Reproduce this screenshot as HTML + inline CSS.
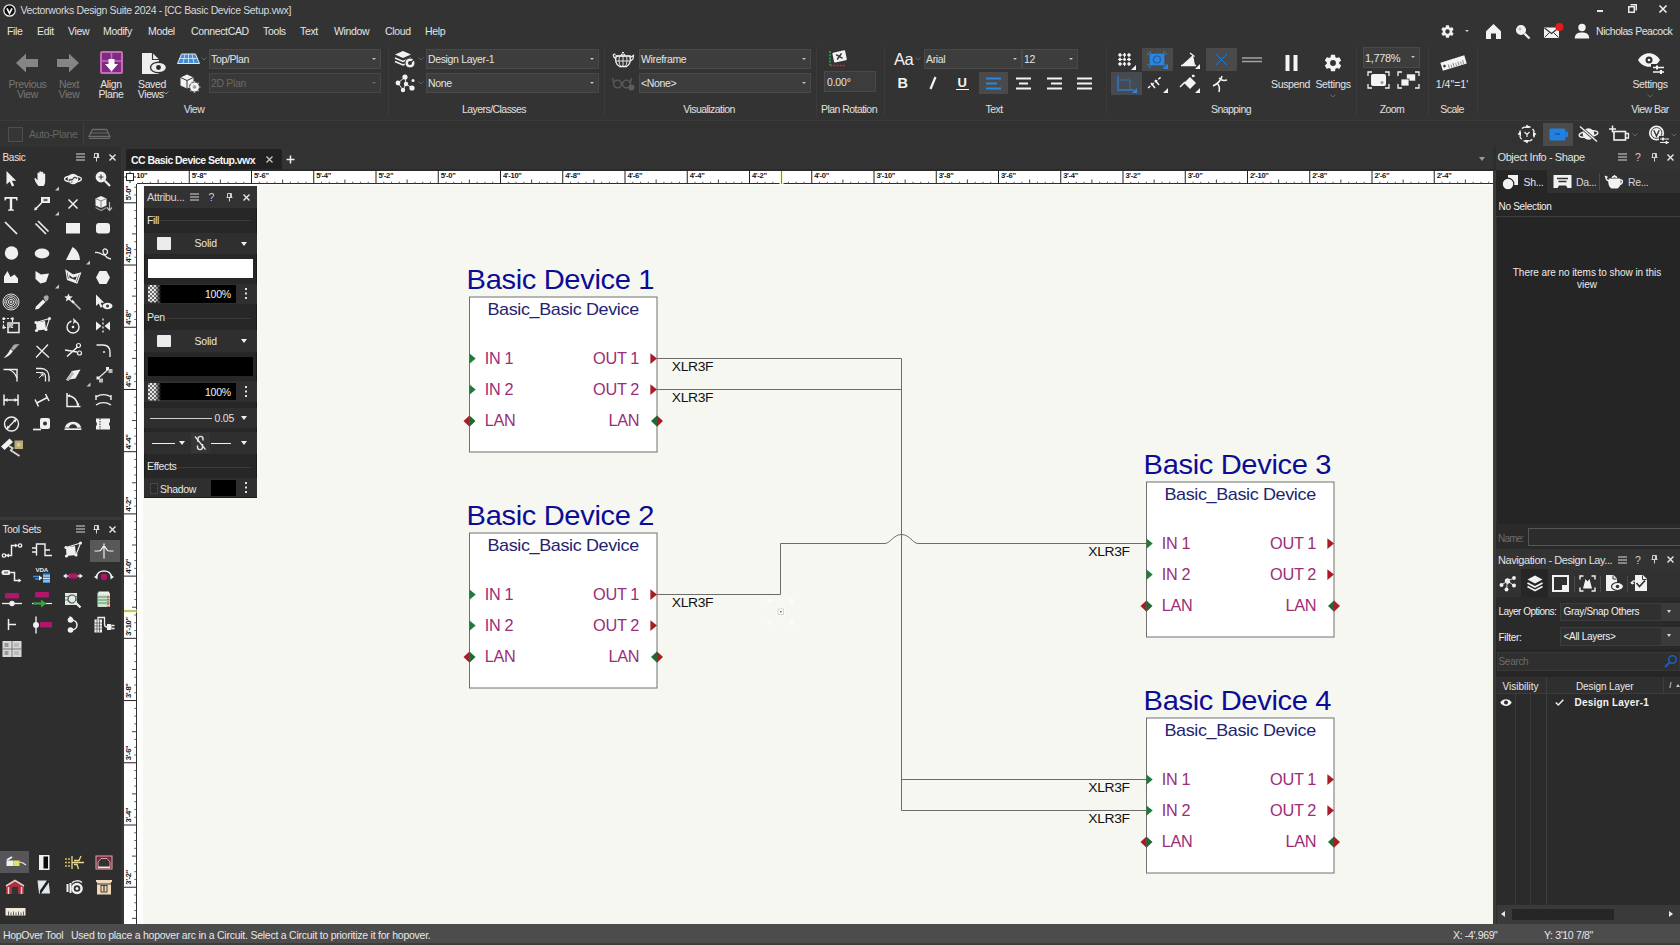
<!DOCTYPE html>
<html lang="en"><head><meta charset="utf-8"><title>Vectorworks Design Suite 2024 - [CC Basic Device Setup.vwx]</title>
<style>
*{box-sizing:border-box;margin:0;padding:0}
html,body{width:1680px;height:945px;overflow:hidden;background:#333333}
body{position:relative;font-family:"Liberation Sans",sans-serif;font-size:10.5px;letter-spacing:-0.35px;color:#e4e4e4;line-height:1;-webkit-font-smoothing:antialiased}
.a{position:absolute;white-space:nowrap}
.c{position:absolute;white-space:nowrap;transform:translateX(-50%);text-align:center}
.dim{color:#777}
svg{position:absolute;overflow:visible}
#titlebar{left:0;top:0;width:1680px;height:20px;background:#333333}
#menubar{left:0;top:20px;width:1680px;height:22px;background:#333333}
#toolbar{left:0;top:42px;width:1680px;height:78px;background:#333333}
#planebar{left:0;top:120px;width:1680px;height:27px;background:#323232}
#leftpanel{left:0;top:147px;width:124px;height:777px;background:#2e2e2e}
#tabstrip{left:124px;top:147px;width:1369px;height:24px;background:#333333}
#rightpanel{left:1493px;top:147px;width:187px;height:777px;background:#2d2d2d}
#status{left:0;top:924px;width:1680px;height:21px;background:#4c4c4c}
#canvas{left:124px;top:171px;width:1369px;height:753px;background:#f7f7f1}
.dd{position:absolute;height:20.5px;background:#3d3d3d;border:1px solid #494949;color:#e4e4e4;font-size:10.5px;padding:4.5px 0 0 1px;white-space:nowrap}
.dd.dis{color:#686868;border-color:#464646;background:#393939}
.dd:after{content:"";position:absolute;right:4.5px;top:8px;border:2px solid transparent;border-top:2.5px solid #c4c4c4;border-bottom:0}
.dd.dis:after{border-top-color:#6a6a6a}
.dd.na:after{display:none}
.sep{position:absolute;top:46px;width:1px;height:70px;background:#3a3a3a}
.glab{position:absolute;top:104px;transform:translateX(-50%);font-size:10.5px;letter-spacing:-0.55px;color:#e0e0e0;white-space:nowrap}
.tlab{position:absolute;transform:translateX(-50%);font-size:10.5px;line-height:10px;text-align:center;color:#e4e4e4;white-space:nowrap}
.tlab.dim{color:#777}
.act{position:absolute;background:#4a4a4a}
</style></head><body>
<div class="a" id="titlebar"></div>
<div class="a" id="menubar"></div>
<div class="a" id="toolbar"></div>
<div class="a" id="planebar"></div>
<div class="a" id="leftpanel"></div>
<div class="a" id="tabstrip"></div>
<div class="a" id="canvas"></div>
<div class="a" id="rightpanel"></div>
<div class="a" id="status"></div>
<svg style="left:2.500px;top:4px" width="13" height="13" viewBox="0 0 13 13"><circle cx="6.500" cy="6.500" r="5.700" fill="#0c0c0c" stroke="#f2f2f2" stroke-width="1.200"/><path d="M4 4.300 L6.500 9.300 L9 4.300" fill="none" stroke="#f4f4f4" stroke-width="1.700"/></svg>
<div class="a" style="left:20.500px;top:5px;color:#dadada">Vectorworks Design Suite 2024 - [CC Basic Device Setup.vwx]</div>
<div class="a" style="left:1597px;top:10px;width:6px;height:2px;background:#e8e8e8"></div>
<svg style="left:1628px;top:4px" width="9" height="9" viewBox="0 0 9 9"><rect x="0.75" y="2.75" width="5.5" height="5.5" fill="none" stroke="#e8e8e8" stroke-width="1.5"/><path d="M2.5 0.75 H8.25 V6.5" fill="none" stroke="#e8e8e8" stroke-width="1.5"/></svg>
<svg style="left:1659px;top:5px" width="8" height="8" viewBox="0 0 8 8"><path d="M0.5 0.5 L7.5 7.5 M7.5 0.5 L0.5 7.5" stroke="#f0f0f0" stroke-width="1.6"/></svg>

<div class="a" style="left:7px;top:26px">File</div>
<div class="a" style="left:37px;top:26px">Edit</div>
<div class="a" style="left:68px;top:26px">View</div>
<div class="a" style="left:103px;top:26px">Modify</div>
<div class="a" style="left:148px;top:26px">Model</div>
<div class="a" style="left:191px;top:26px">ConnectCAD</div>
<div class="a" style="left:263px;top:26px">Tools</div>
<div class="a" style="left:300px;top:26px">Text</div>
<div class="a" style="left:334px;top:26px">Window</div>
<div class="a" style="left:385px;top:26px">Cloud</div>
<div class="a" style="left:425px;top:26px">Help</div>
<!-- right cluster -->
<svg style="left:1440px;top:24px" width="15" height="15" viewBox="0 0 24 24"><path fill="#f0f0f0" d="M19.4 13c.04-.33.06-.66.06-1s-.02-.67-.07-1l2.1-1.650c.2-.15.25-.42.13-.64l-2-3.460c-.12-.22-.39-.3-.61-.22l-2.490 1c-.52-.4-1.080-.73-1.690-.98l-.38-2.650A.49.49 0 0 0 14 2h-4c-.25 0-.46.18-.49.42l-.38 2.650c-.61.25-1.170.59-1.690.98l-2.490-1c-.23-.09-.49 0-.61.22l-2 3.460c-.13.22-.07.49.12.64L4.570 11c-.04.33-.07.67-.07 1s.03.670.07 1l-2.110 1.650c-.19.150-.24.420-.12.640l2 3.460c.12.220.39.300.61.220l2.490-1c.52.400 1.080.730 1.690.980l.38 2.650c.03.240.24.420.49.420h4c.25 0 .46-.18.49-.42l.38-2.650c.61-.25 1.170-.59 1.690-.98l2.490 1c.23.090.49 0 .61-.22l2-3.460c.12-.22.07-.49-.12-.64L19.400 13zM12 15.500A3.500 3.500 0 1 1 12 8.500a3.500 3.500 0 0 1 0 7z"/></svg>
<div class="a" style="left:1465px;top:30px;border:2.200px solid transparent;border-top:2.500px solid #ccc;border-bottom:0"></div>
<svg style="left:1485px;top:23px" width="17" height="17" viewBox="0 0 17 17"><path d="M8.5 1 L16 8.200 V16 H11 V10.500 H6 V16 H1 V8.200 Z" fill="#f2f2f2"/></svg>
<svg style="left:1515px;top:24px" width="16" height="16" viewBox="0 0 16 16"><circle cx="6" cy="6" r="4.300" fill="#f2f2f2" stroke="#f2f2f2" stroke-width="1.5"/><path d="M9.500 9.500 L14.500 14.500" stroke="#f2f2f2" stroke-width="2.300"/><circle cx="5" cy="5" r="1.500" fill="#bbb"/></svg>
<svg style="left:1543px;top:22px" width="22" height="18" viewBox="0 0 22 18"><rect x="1" y="5.500" width="15" height="10.500" fill="#f2f2f2"/><path d="M1.500 6 L8.500 11.500 L15.500 6" stroke="#333" stroke-width="1.200" fill="none"/><path d="M1.500 15.500 L6.500 10.500 M15.500 15.500 L10.500 10.500" stroke="#333" stroke-width="1"/><circle cx="16.500" cy="5" r="4" fill="#e21b1b"/></svg>
<svg style="left:1574px;top:23px" width="16" height="16" viewBox="0 0 16 16"><circle cx="8" cy="4.500" r="3.700" fill="#f2f2f2"/><path d="M0.800 15.500 C0.800 10.500 4 9.500 8 9.500 S15.200 10.500 15.200 15.500 Z" fill="#f2f2f2"/></svg>
<div class="a" style="left:1596px;top:26px;letter-spacing:-0.45px">Nicholas Peacock</div>

<!-- View group -->
<svg style="left:16px;top:53px" width="22" height="20" viewBox="0 0 22 20"><path d="M0 10 L10 0.500 V6 H22 V14 H10 V19.500 Z" fill="#858585"/></svg>
<div class="tlab dim" style="left:27.500px;top:79px">Previous<br>View</div>
<svg style="left:57px;top:53px" width="22" height="20" viewBox="0 0 22 20"><path d="M22 10 L12 0.500 V6 H0 V14 H12 V19.500 Z" fill="#858585"/></svg>
<div class="tlab dim" style="left:69px;top:79px">Next<br>View</div>
<svg style="left:100px;top:51px" width="23" height="23" viewBox="0 0 23 23"><rect x="1" y="1" width="21" height="21" rx="1" fill="#7d2c7e" stroke="#c969bd" stroke-width="2"/><path d="M11.500 1 V22 M1 10 H22" stroke="#c969bd" stroke-width="1.600"/><path d="M8.500 8 H14.500 V13 H18 L11.500 20.500 L5 13 H8.500 Z" fill="#fafafa"/></svg>
<div class="tlab" style="left:111px;top:79px">Align<br>Plane</div>
<svg style="left:141px;top:52px" width="27" height="23" viewBox="0 0 27 23"><path d="M1 1 H11.500 L18 7.500 V22 H1 Z" fill="#f0eef0"/><path d="M11.500 1 V7.500 H18" fill="none" stroke="#333" stroke-width="1.200"/><ellipse cx="17.500" cy="15.500" rx="8" ry="5.300" fill="#f0eef0" stroke="#333" stroke-width="1.400"/><circle cx="17.500" cy="15.500" r="2.400" fill="#2a2a2a"/></svg>
<div class="tlab" style="left:152px;top:79px">Saved<br>Views&nbsp;</div>
<svg style="left:163px;top:91px" width="6" height="4" viewBox="0 0 6 4"><path d="M0.500 0.500 L3 3 L5.500 0.500" stroke="#999" fill="none"/></svg>
<svg style="left:177px;top:53px" width="23" height="12" viewBox="0 0 23 12"><path d="M4.500 1 H18.500 L22.500 10.500 H0.500 Z" fill="#3f8fdc" stroke="#dfe9f5" stroke-width="1"/><path d="M11.500 1 V10.500 M2.500 5.500 H20.500 M8 1 L6 10.500 M15 1 L17 10.500" stroke="#dfe9f5" stroke-width="0.800"/></svg>
<svg style="left:201px;top:57px" width="6" height="4" viewBox="0 0 6 4"><path d="M0.500 0.500 L3 3 L5.500 0.500" stroke="#626262" fill="none"/></svg>
<svg style="left:180px;top:74px" width="20" height="19" viewBox="0 0 20 19"><path d="M7 0.500 L13.500 3.500 V11.500 L7 14.500 L0.500 11.500 V3.500 Z" fill="#f2f2f2"/><path d="M0.500 3.500 L7 6.500 L13.500 3.500 M7 6.500 V14.500" stroke="#333" stroke-width="1" fill="none"/><circle cx="14.500" cy="13" r="5" fill="#f2f2f2" stroke="#333" stroke-width="1"/><circle cx="14.500" cy="13" r="1.800" fill="#333"/><path d="M14.500 7 V19 M8.500 13 H20.500 M10.300 8.800 L18.700 17.200 M18.700 8.800 L10.300 17.200" stroke="#f2f2f2" stroke-width="1.600" opacity="0.550"/></svg>
<div class="dd" style="left:209px;top:48.500px;width:172px">Top/Plan</div>
<div class="dd dis" style="left:209px;top:72.500px;width:172px">2D Plan</div>
<div class="glab" style="left:194px">View</div>
<div class="sep" style="left:388px"></div>
<!-- Layers/Classes -->
<svg style="left:394px;top:50px" width="22" height="19" viewBox="0 0 22 19"><path d="M1 4.500 L9 1 L17 4.500 L9 8 Z" fill="#f2f2f2"/><path d="M1 8 L9 11.500 L17 8 M1 11.500 L9 15 L13 13.300" stroke="#f2f2f2" stroke-width="1.500" fill="none"/><circle cx="16" cy="13" r="5" fill="#f2f2f2" stroke="#333" stroke-width="1"/><circle cx="16" cy="13" r="2" fill="#333"/><path d="M16 13 L21 9" stroke="#333" stroke-width="1.400"/></svg>
<svg style="left:418px;top:57px" width="6" height="4" viewBox="0 0 6 4"><path d="M0.500 0.500 L3 3 L5.500 0.500" stroke="#626262" fill="none"/></svg>
<svg style="left:395px;top:74px" width="21" height="19" viewBox="0 0 21 19"><g fill="#f2f2f2"><circle cx="10" cy="3" r="2.600"/><circle cx="3" cy="9" r="2.400"/><circle cx="11" cy="10" r="2.200"/><circle cx="17" cy="14" r="2.600"/><circle cx="8" cy="16" r="2.200"/><circle cx="18" cy="6.500" r="1.500"/></g><path d="M10 3 L3 9 L8 16 L11 10 L17 14 M11 10 L10 3" stroke="#f2f2f2" stroke-width="0.900" fill="none"/></svg>
<svg style="left:418px;top:81px" width="6" height="4" viewBox="0 0 6 4"><path d="M0.500 0.500 L3 3 L5.500 0.500" stroke="#626262" fill="none"/></svg>
<div class="dd" style="left:426px;top:48.500px;width:173px">Design Layer-1</div>
<div class="dd" style="left:426px;top:72.500px;width:173px">None</div>
<div class="glab" style="left:494px">Layers/Classes</div>
<div class="sep" style="left:604px"></div>
<!-- Visualization -->
<svg style="left:612px;top:50px" width="22" height="18" viewBox="0 0 22 18"><path d="M4.500 6 C2.500 10 4 15 7.500 16.500 H14.500 C18 15 19.500 10 17.500 6 Z" fill="none" stroke="#f2f2f2" stroke-width="1.300"/><path d="M3 6 H19 M11 6 V16.500 M7.500 6.500 C6.500 10 7 14 8.500 16.500 M14.500 6.500 C15.500 10 15 14 13.500 16.500 M4 11 H18" stroke="#f2f2f2" stroke-width="0.900" fill="none"/><path d="M9 5.500 C9 3.500 13 3.500 13 5.500 M10 2.500 H12" stroke="#f2f2f2" stroke-width="1.200" fill="none"/><path d="M4 8.500 C0.500 7 0.500 3 3.500 4.500 M18 7.500 L21.500 5.500 L21 9 L18.500 11" stroke="#f2f2f2" stroke-width="1.200" fill="none"/></svg>
<svg style="left:612px;top:76px" width="23" height="15" viewBox="0 0 23 15"><g stroke="#5c5c5c" stroke-width="1.300" fill="none"><circle cx="5.500" cy="8" r="3.800"/><circle cx="14.500" cy="8" r="3.800"/><path d="M9.300 7.500 C9.800 6.500 10.200 6.500 10.700 7.500 M1.700 7 L0.500 2 M18.300 7 L19.500 2"/></g><circle cx="19.500" cy="11.500" r="3" fill="#5c5c5c"/></svg>
<div class="dd" style="left:639px;top:48.500px;width:172px">Wireframe</div>
<div class="dd" style="left:639px;top:72.500px;width:172px">&lt;None&gt;</div>
<div class="glab" style="left:709px">Visualization</div>
<div class="sep" style="left:816px"></div>
<!-- Plan rotation -->
<svg style="left:827px;top:48px" width="22" height="21" viewBox="0 0 22 21"><path d="M3 3 V17" stroke="#2fa84f" stroke-width="1.600" stroke-dasharray="2 1.200"/><path d="M3 17.500 H19" stroke="#d03030" stroke-width="1.600" stroke-dasharray="2 1.200"/><rect x="6" y="3.500" width="13" height="10" rx="1" fill="#f2f2f2" transform="rotate(-12 12 8)"/><path d="M9.500 6 L15 11 M15 6 L9.500 11" stroke="#333" stroke-width="1.500" transform="rotate(-12 12 8)"/></svg>
<div class="dd na" style="left:824px;top:71px;width:52px;height:21px;background:#3c3c3c;padding-left:2px"><span style="letter-spacing:-0.2px">0.00°</span></div>
<div class="glab" style="left:849px">Plan Rotation</div>
<div class="sep" style="left:884px"></div>
<!-- Text group -->
<div class="a" style="left:894px;top:51px;font-size:16.500px;letter-spacing:-0.5px;color:#f4f4f4">Aa</div>
<svg style="left:915px;top:57px" width="6" height="4" viewBox="0 0 6 4"><path d="M0.500 0.500 L3 3 L5.500 0.500" stroke="#626262" fill="none"/></svg>
<div class="dd" style="left:924px;top:48.500px;width:98px">Arial</div>
<div class="dd" style="left:1022px;top:48.500px;width:56px">12</div>
<div class="a" style="left:897.500px;top:76px;font-size:14.500px;font-weight:700;color:#f4f4f4;letter-spacing:0">B</div>
<svg style="left:927px;top:76px" width="12" height="14" viewBox="0 0 12 14"><path d="M8.500 1 L3.500 13" stroke="#f4f4f4" stroke-width="2.200"/></svg>
<div class="a" style="left:957.500px;top:76px;font-size:13px;font-weight:700;color:#f4f4f4;letter-spacing:0">U</div>
<div class="a" style="left:956px;top:88.500px;width:13px;height:1.500px;background:#f4f4f4"></div>
<div class="act" style="left:979px;top:72px;width:29px;height:22px"></div>
<svg style="left:986px;top:77px" width="15" height="13" viewBox="0 0 15 13"><path d="M0 1.500 H15 M0 6.500 H11 M0 11.500 H15" stroke="#2b86dc" stroke-width="2"/></svg>
<svg style="left:1016px;top:77px" width="15" height="13" viewBox="0 0 15 13"><path d="M0 1.500 H15 M3 6.500 H12 M0 11.500 H15" stroke="#f4f4f4" stroke-width="2"/></svg>
<svg style="left:1047px;top:77px" width="15" height="13" viewBox="0 0 15 13"><path d="M0 1.500 H15 M4 6.500 H15 M0 11.500 H15" stroke="#f4f4f4" stroke-width="2"/></svg>
<svg style="left:1077px;top:77px" width="15" height="13" viewBox="0 0 15 13"><path d="M0 1.500 H15 M0 6.500 H15 M0 11.500 H15" stroke="#f4f4f4" stroke-width="2"/></svg>
<div class="glab" style="left:994px">Text</div>
<div class="sep" style="left:1106px"></div>
<!-- Snapping -->
<svg style="left:1116px;top:52px" width="22" height="18" viewBox="0 0 22 18"><path d="M2 3 H15 M2 7.500 H15 M2 12 H15 M4 1 V14 M8.500 1 V14 M13 1 V14" stroke="#f4f4f4" stroke-width="1" stroke-dasharray="1.500 1.500"/><g fill="#f4f4f4"><circle cx="4" cy="3" r="1.400"/><circle cx="8.500" cy="3" r="1.400"/><circle cx="13" cy="3" r="1.400"/><circle cx="4" cy="7.500" r="1.400"/><circle cx="8.500" cy="7.500" r="1.400"/><circle cx="13" cy="7.500" r="1.400"/><circle cx="4" cy="12" r="1.400"/><circle cx="8.500" cy="12" r="1.400"/><circle cx="13" cy="12" r="1.400"/><path d="M20 13 V18 H15 Z"/></g></svg>
<div class="act" style="left:1142px;top:48px;width:31px;height:23px"></div>
<svg style="left:1146px;top:50px" width="24" height="20" viewBox="0 0 24 20"><rect x="4" y="4" width="14" height="11" fill="#2b86dc"/><path d="M1 4 H21 M1 15 H21 M4 1 V18 M18 1 V18" stroke="#2b86dc" stroke-width="1" stroke-dasharray="2 1"/><circle cx="11" cy="9.500" r="3.500" fill="none" stroke="#1b5fa6" stroke-width="1.200"/><path d="M22 14 V19 H17 Z" fill="#2b86dc"/></svg>
<svg style="left:1180px;top:51px" width="22" height="19" viewBox="0 0 22 19"><path d="M2 14 L13 4 L15 14 Z" fill="#f4f4f4"/><path d="M1 14.500 H16 M10 2 L14.500 5.500" stroke="#f4f4f4" stroke-width="1.300"/><path d="M20 13 V18 H15 Z" fill="#f4f4f4"/></svg>
<div class="act" style="left:1206px;top:48px;width:31px;height:23px"></div>
<svg style="left:1214px;top:52px" width="15" height="15" viewBox="0 0 15 15"><path d="M2 2 L13 13 M13 2 L2 13" stroke="#2a78c8" stroke-width="1"/></svg>
<svg style="left:1241px;top:56px" width="22" height="8" viewBox="0 0 22 8"><path d="M1 2 H21 M1 5.500 H21" stroke="#a4a4a4" stroke-width="1.300"/></svg>
<div class="act" style="left:1111px;top:72px;width:31px;height:23px;background:#484a52"></div>
<svg style="left:1115px;top:75px" width="24" height="19" viewBox="0 0 24 19"><path d="M3 1 V15 H19" stroke="#2b7bc8" stroke-width="1.400" fill="none"/><path d="M3 5 H15 V15" stroke="#2b7bc8" stroke-width="1" fill="none" opacity="0.800"/><path d="M22 13 V18 H17 Z" fill="#2b86dc"/></svg>
<svg style="left:1146px;top:75px" width="24" height="19" viewBox="0 0 24 19"><path d="M2 13 L15 2" stroke="#f4f4f4" stroke-width="1.500" stroke-dasharray="3 1.500"/><path d="M5 8 L9 13 M9 5 L13 10" stroke="#f4f4f4" stroke-width="1.500"/><path d="M22 13 V18 H17 Z" fill="#f4f4f4"/></svg>
<svg style="left:1178px;top:74px" width="24" height="20" viewBox="0 0 24 20"><path d="M6 9 L12 3 L18 9 L12 15 Z" fill="#f4f4f4"/><path d="M2 13 L7 8 M15 1 L16.500 2.500" stroke="#f4f4f4" stroke-width="1.500"/><circle cx="15" cy="2" r="1.200" fill="#f4f4f4"/><path d="M22 14 V19 H17 Z" fill="#f4f4f4"/></svg>
<svg style="left:1211px;top:75px" width="18" height="18" viewBox="0 0 18 18"><path d="M2 11 C6 9 10 6 11 1 M6 8 C8 10 9 13 8 17 M8 3 C10 5 13 6 16 5" stroke="#f4f4f4" stroke-width="1.500" fill="none"/></svg>
<svg style="left:1285px;top:55px" width="13" height="16" viewBox="0 0 13 16"><rect x="0.500" y="0" width="4" height="16" fill="#f4f4f4"/><rect x="8.500" y="0" width="4" height="16" fill="#f4f4f4"/></svg>
<div class="tlab" style="left:1290.500px;top:79px">Suspend</div>
<svg style="left:1323px;top:53px" width="20" height="20" viewBox="0 0 24 24"><path fill="#f4f4f4" d="M19.4 13c.04-.33.06-.66.06-1s-.02-.67-.07-1l2.100-1.650c.2-.15.25-.42.13-.64l-2-3.460c-.12-.22-.39-.3-.61-.22l-2.490 1c-.52-.4-1.080-.73-1.690-.98l-.38-2.650A.49.49 0 0 0 14 2h-4c-.25 0-.46.18-.49.42l-.38 2.650c-.61.250-1.170.590-1.690.980l-2.490-1c-.23-.09-.49 0-.61.220l-2 3.460c-.13.220-.07.490.12.640L4.570 11c-.04.330-.07.670-.07 1s.03.670.07 1l-2.110 1.650c-.19.150-.24.420-.12.640l2 3.460c.12.220.39.300.61.220l2.490-1c.52.400 1.080.730 1.690.980l.38 2.650c.03.240.24.420.49.420h4c.25 0 .46-.18.49-.42l.38-2.650c.61-.25 1.170-.59 1.690-.98l2.490 1c.23.090.49 0 .61-.22l2-3.460c.12-.22.070-.49-.12-.64L19.400 13zM12 15.500A3.500 3.500 0 1 1 12 8.500a3.500 3.500 0 0 1 0 7z"/></svg>
<div class="tlab" style="left:1333px;top:79px">Settings</div>
<svg style="left:1330px;top:94px" width="6" height="4" viewBox="0 0 6 4"><path d="M0.500 0.500 L3 3 L5.500 0.500" stroke="#666" fill="none"/></svg>
<div class="glab" style="left:1231px">Snapping</div>
<div class="sep" style="left:1356px"></div>
<!-- Zoom -->
<div class="dd" style="left:1363px;top:47px;width:57px;height:21px;font-size:11px">1,778%</div>
<svg style="left:1367px;top:71px" width="23" height="18" viewBox="0 0 23 18"><rect x="4" y="3" width="15" height="12" rx="2" fill="#f4f4f4"/><path d="M1 5 V1 H5 M18 1 H22 V5 M22 13 V17 H18 M5 17 H1 V13" stroke="#f4f4f4" stroke-width="1.300" fill="none"/><circle cx="15" cy="11.500" r="1.500" fill="#999"/></svg>
<svg style="left:1397px;top:71px" width="23" height="18" viewBox="0 0 23 18"><rect x="9.500" y="3" width="9" height="7" fill="#f4f4f4" stroke="#333" stroke-width="0.600"/><rect x="4" y="8" width="8" height="7" fill="#f4f4f4" stroke="#333" stroke-width="0.800"/><path d="M1 5 V1 H5 M18 1 H22 V5 M22 13 V17 H18 M5 17 H1 V13" stroke="#f4f4f4" stroke-width="1.300" fill="none"/></svg>
<div class="glab" style="left:1392px">Zoom</div>
<div class="sep" style="left:1428px"></div>
<!-- Scale -->
<svg style="left:1439px;top:53px" width="28" height="20" viewBox="0 0 28 20"><g transform="rotate(-17 14 10)"><rect x="2" y="6" width="25" height="8.500" fill="#f4f4f4"/><circle cx="5" cy="10.500" r="1.300" fill="#333"/><path d="M9 10 V14 M11.500 11 V14 M14 10 V14 M16.500 11 V14 M19 10 V14 M21.500 11 V14 M24 10 V14" stroke="#888" stroke-width="0.900"/></g></svg>
<div class="tlab" style="left:1452px;top:79px;letter-spacing:0">1/4"=1'</div>
<div class="glab" style="left:1452px">Scale</div>
<div class="sep" style="left:1477px"></div>
<!-- View bar -->
<svg style="left:1637px;top:51px" width="28" height="24" viewBox="0 0 28 24"><path d="M1 9 C6 0 18 0 23 9 C18 18 6 18 1 9 Z" fill="#f4f4f4"/><circle cx="12" cy="9" r="3.500" fill="#333"/><circle cx="12" cy="9" r="1.300" fill="#f4f4f4"/><rect x="14" y="13" width="14" height="11" fill="#333"/><path d="M16 16.500 H27 M16 21 H27" stroke="#f4f4f4" stroke-width="1.400"/><path d="M20 14.500 V18.500 M24 19 V23" stroke="#f4f4f4" stroke-width="2"/></svg>
<div class="tlab" style="left:1650px;top:79px">Settings</div>
<svg style="left:1647px;top:94px" width="6" height="4" viewBox="0 0 6 4"><path d="M0.500 0.500 L3 3 L5.500 0.500" stroke="#666" fill="none"/></svg>
<div class="glab" style="left:1650px">View Bar</div>



<div class="a" style="left:0;top:120px;width:1680px;height:1px;background:#3b3b3b"></div>
<div class="a" style="left:8px;top:127px;width:15px;height:15px;border:1px solid #4e4e4e;background:#363636"></div>
<div class="a" style="left:29px;top:129px;color:#646464">Auto-Plane</div>
<div class="a" style="left:83px;top:123px;width:1px;height:22px;background:#3e3e3e"></div>
<svg style="left:88px;top:128px" width="23" height="12" viewBox="0 0 23 12"><path d="M4.500 1.500 H18.500 L22 8.500 H1 Z" fill="none" stroke="#6c6c6c" stroke-width="1.300"/><path d="M3 5 H20 M1 10.500 H22" stroke="#6c6c6c" stroke-width="1.200"/></svg>
<!-- right icons -->
<svg style="left:1517px;top:124px" width="20" height="20" viewBox="0 0 20 20"><circle cx="10" cy="10" r="7.500" fill="none" stroke="#f0f0f0" stroke-width="1.300" stroke-dasharray="3.500 2.400"/><path d="M10 0.500 L12.500 4 H7.500 Z M10 19.500 L12.500 16 H7.500 Z M0.500 10 L4 7.500 V12.500 Z M19.500 10 L16 7.500 V12.500 Z" fill="#f0f0f0"/><path d="M7.500 8 L10 10.500 L12.500 8 M10 10.500 V13" stroke="#f0f0f0" stroke-width="1.100" fill="none"/></svg>
<div class="act" style="left:1543px;top:123px;width:30px;height:23px;background:#4b4b4b"></div>
<svg style="left:1549px;top:128px" width="19" height="14" viewBox="0 0 19 14"><rect x="0.500" y="0.500" width="16" height="12" rx="1.500" fill="#2380de"/><rect x="16.500" y="4" width="2.500" height="5" fill="#2380de"/><path d="M6 6 H11" stroke="#154f8c" stroke-width="1.200"/></svg>
<svg style="left:1578px;top:125px" width="21" height="18" viewBox="0 0 21 18"><circle cx="10.500" cy="9" r="5.800" fill="#f0f0f0"/><ellipse cx="10.500" cy="9" rx="9.500" ry="3" fill="none" stroke="#f0f0f0" stroke-width="1.300" transform="rotate(-8 10.500 9)"/><path d="M2 1.500 L19 16.500" stroke="#333" stroke-width="3"/><path d="M2 1.500 L19 16.500" stroke="#f0f0f0" stroke-width="1.400"/></svg>
<svg style="left:1608px;top:125px" width="22" height="18" viewBox="0 0 22 18"><rect x="6" y="6.500" width="11.500" height="8.500" fill="none" stroke="#f0f0f0" stroke-width="1.600"/><path d="M17.500 8.500 H20.500 V13 H17.500" fill="none" stroke="#f0f0f0" stroke-width="1.300"/><path d="M1 4 H8 M4.500 0.500 V7.500" stroke="#f0f0f0" stroke-width="1.500"/></svg>
<svg style="left:1632px;top:133px" width="6" height="4" viewBox="0 0 6 4"><path d="M0.500 0.500 L3 3 L5.500 0.500" stroke="#666" fill="none"/></svg>
<svg style="left:1646px;top:123px" width="24" height="22" viewBox="0 0 24 22"><circle cx="10.500" cy="10" r="7.600" fill="#f0f0f0"/><circle cx="10.500" cy="10" r="5.400" fill="none" stroke="#333" stroke-width="0.900"/><path d="M7.800 7.300 L10.500 13 L13.200 7.300" fill="none" stroke="#333" stroke-width="1.400"/><rect x="13" y="13" width="11" height="9" fill="#323232"/><path d="M14 16 H23 M14 19.500 H23" stroke="#f0f0f0" stroke-width="1.200"/><path d="M17 14.500 V17.500 M20.500 18 V21" stroke="#f0f0f0" stroke-width="1.800"/></svg>
<svg style="left:1671px;top:133px" width="6" height="4" viewBox="0 0 6 4"><path d="M0.500 0.500 L3 3 L5.500 0.500" stroke="#666" fill="none"/></svg>

<!-- Basic palette -->
<div class="a" style="left:2.500px;top:152.500px;font-size:10px;letter-spacing:-0.3px">Basic</div>
<svg style="left:76px;top:153px" width="9" height="8" viewBox="0 0 9 8"><path d="M0 1 H9 M0 4 H9 M0 7 H9" stroke="#d8d8d8" stroke-width="1.100"/></svg>
<svg style="left:93px;top:152.5px" width="7" height="9" viewBox="0 0 7 9"><path d="M1.500 0.500 H5.500 V4.500 H1.500 Z M0.500 4.500 H6.500 M3.500 4.500 V8.500" stroke="#d8d8d8" stroke-width="1" fill="none"/><path d="M4.500 0.500 V4.500" stroke="#d8d8d8" stroke-width="1.200"/></svg>
<svg style="left:109px;top:153.5px" width="7" height="7" viewBox="0 0 7 7"><path d="M0.500 0.500 L6.500 6.500 M6.500 0.500 L0.500 6.500" stroke="#e8e8e8" stroke-width="1.400"/></svg>
<svg style="left:2px;top:170px" width="18" height="18" viewBox="0 0 18 18"><path d="M4.500 1 V14.500 L7.700 11.500 L10 16.500 L12.200 15.500 L9.900 10.700 H14.200 Z" fill="#f0f0f0"/></svg>
<svg style="left:33px;top:170px" width="18" height="18" viewBox="0 0 18 18"><path d="M5.500 16 C3.500 14 2 11 1.500 9 C1.300 8 2.500 7.700 3.200 8.700 L4.500 10.500 V3.500 C4.500 2.200 6.200 2.200 6.300 3.500 V2.200 C6.400 0.900 8.200 0.900 8.300 2.200 V2.700 C8.400 1.400 10.200 1.500 10.300 2.800 V4.200 C10.500 3.100 12.200 3.200 12.200 4.500 V11 C12.200 13.500 11.500 15 10.500 16 Z" fill="#f0f0f0"/><path d="M26 16.5 v4 h-4 z" fill="#c8c8c8"/></svg>
<svg style="left:64px;top:170px" width="18" height="18" viewBox="0 0 18 18"><circle cx="9" cy="9" r="5.300" fill="#f0f0f0"/><ellipse cx="9" cy="9" rx="8.500" ry="3" fill="none" stroke="#f0f0f0" stroke-width="1.300"/><path d="M5 10.500 C6.500 8 8 11 9 9 S11.500 7 13 8.500" stroke="#444" stroke-width="1.300" fill="none"/><circle cx="6.500" cy="11.500" r="1.600" fill="none" stroke="#666" stroke-width="0.800"/></svg>
<svg style="left:94px;top:170px" width="18" height="18" viewBox="0 0 18 18"><circle cx="7" cy="7" r="4.600" fill="#f0f0f0" stroke="#f0f0f0" stroke-width="1.600"/><path d="M10.800 10.800 L16 16" stroke="#f0f0f0" stroke-width="2.200"/><path d="M7 4.500 V9.500 M4.500 7 H9.500" stroke="#444" stroke-width="1.200"/></svg>
<svg style="left:2px;top:194.5px" width="18" height="18" viewBox="0 0 18 18"><path d="M2.500 2 H15.500 V5.500 H14.300 L13.800 3.700 H10.200 V14.200 L12 14.700 V15.800 H6 V14.700 L7.800 14.200 V3.700 H4.200 L3.700 5.500 H2.500 Z" fill="#f0f0f0"/></svg>
<svg style="left:33px;top:194.5px" width="18" height="18" viewBox="0 0 18 18"><rect x="8" y="2" width="9" height="6" fill="#f0f0f0"/><rect x="10.500" y="3.800" width="4" height="2.400" fill="#666"/><path d="M8.500 8 L2.500 14" stroke="#f0f0f0" stroke-width="1.600"/><path d="M1 15.500 L4.500 14.500 L2 12 Z" fill="#f0f0f0"/><path d="M26 16.5 v4 h-4 z" fill="#c8c8c8"/></svg>
<svg style="left:64px;top:194.5px" width="18" height="18" viewBox="0 0 18 18"><path d="M4.500 4.500 L13.500 13.500 M13.500 4.500 L4.500 13.500" stroke="#f0f0f0" stroke-width="1.500"/></svg>
<svg style="left:94px;top:194.5px" width="18" height="18" viewBox="0 0 18 18"><path d="M7 1 L12.500 3.500 V10.500 L7 13 L1.500 10.500 V3.500 Z" fill="#f0f0f0"/><path d="M1.500 3.500 L7 6 L12.500 3.500 M7 6 V13" stroke="#777" stroke-width="0.900" fill="none"/><path d="M1.500 12.500 L7 15.500 L12.500 12.500" stroke="#999" stroke-width="1.300" fill="none"/><path d="M15.500 7 V15 M13 12.500 L15.500 15.500 L18 12.500" stroke="#bbb" stroke-width="1.200" fill="none"/></svg>
<svg style="left:2px;top:219px" width="18" height="18" viewBox="0 0 18 18"><path d="M3 3 L15 15" stroke="#f0f0f0" stroke-width="1.700"/></svg>
<svg style="left:33px;top:219px" width="18" height="18" viewBox="0 0 18 18"><path d="M2.500 4.500 L13 15 M5 2 L15.500 12.500" stroke="#f0f0f0" stroke-width="1.600"/></svg>
<svg style="left:64px;top:219px" width="18" height="18" viewBox="0 0 18 18"><rect x="2" y="4" width="14" height="10.500" fill="#f0f0f0"/></svg>
<svg style="left:94px;top:219px" width="18" height="18" viewBox="0 0 18 18"><rect x="2" y="4" width="14" height="10.500" rx="3" fill="#f0f0f0"/></svg>
<svg style="left:2px;top:243.5px" width="18" height="18" viewBox="0 0 18 18"><circle cx="9.500" cy="9" r="6.700" fill="#f0f0f0"/></svg>
<svg style="left:33px;top:243.5px" width="18" height="18" viewBox="0 0 18 18"><ellipse cx="9" cy="9.500" rx="7.300" ry="5" fill="#f0f0f0"/></svg>
<svg style="left:64px;top:243.5px" width="18" height="18" viewBox="0 0 18 18"><path d="M2 16 L8.500 3 C12.500 5 15.500 9.500 16 16 Z" fill="#f0f0f0"/><path d="M26 16.5 v4 h-4 z" fill="#c8c8c8"/></svg>
<svg style="left:94px;top:243.5px" width="18" height="18" viewBox="0 0 18 18"><path d="M1 8.500 C4 8 6 9 8.500 10.500 C12 12.500 15 8 12.500 5.500 C10.500 3.500 8 6 9.500 9 C11 12 13.500 14.500 17 15" stroke="#f0f0f0" stroke-width="1.300" fill="none"/></svg>
<svg style="left:2px;top:268px" width="18" height="18" viewBox="0 0 18 18"><path d="M2 15 V8.500 L5.500 3 L8.500 9 L12.500 6.500 L16 10.500 V15 Z" fill="#f0f0f0"/></svg>
<svg style="left:33px;top:268px" width="18" height="18" viewBox="0 0 18 18"><path d="M2.500 3 L8 6.500 L16 5.500 L13 14 L7.500 15.500 L2.500 11 Z" fill="#f0f0f0"/><path d="M26 16.5 v4 h-4 z" fill="#c8c8c8"/></svg>
<svg style="left:64px;top:268px" width="18" height="18" viewBox="0 0 18 18"><path d="M2 2.500 L9 7 L16.500 5 L13 15 L3.500 11.500 Z" fill="none" stroke="#f0f0f0" stroke-width="1.200"/><path d="M4.200 5.500 L8.800 9 L13.800 7.500 L11.800 12.800 L5.200 10.300 Z" fill="none" stroke="#f0f0f0" stroke-width="1.200"/><path d="M2 2.500 L9 7 L16.500 5 L13.800 7.500 L8.800 9 L4.200 5.500 Z M13 15 L11.800 12.800 L5.200 10.300 L3.500 11.500 Z" fill="#f0f0f0"/></svg>
<svg style="left:94px;top:268px" width="18" height="18" viewBox="0 0 18 18"><path d="M5.500 3 H12.500 L16 9.500 L12.500 16 H5.500 L2 9.500 Z" fill="#f0f0f0"/></svg>
<svg style="left:2px;top:292.5px" width="18" height="18" viewBox="0 0 18 18"><g fill="none" stroke="#f0f0f0" stroke-width="0.900"><circle cx="9" cy="9" r="8"/><circle cx="9" cy="9" r="6.200"/><circle cx="9" cy="9" r="4.400"/><circle cx="9" cy="9" r="2.600"/><circle cx="9" cy="9" r="0.900"/></g></svg>
<svg style="left:33px;top:292.5px" width="18" height="18" viewBox="0 0 18 18"><path d="M2 16.500 L3 13.500 L10 6.500 L12.500 9 L5.500 16 Z" fill="#f0f0f0"/><path d="M10.500 4.500 C12 1.500 16.500 1.500 15.500 5.500 C15 8 13 8.500 12.500 8.500 Z" fill="#aaa"/></svg>
<svg style="left:64px;top:292.5px" width="18" height="18" viewBox="0 0 18 18"><path d="M4.500 0.500 L5.700 3.300 L8.700 3.500 L6.400 5.400 L7.200 8.400 L4.500 6.800 L1.800 8.400 L2.600 5.400 L0.300 3.500 L3.300 3.300 Z" fill="#f0f0f0"/><path d="M7.500 7.500 L10 10" stroke="#f0f0f0" stroke-width="2.400"/><path d="M10 10 L16.500 16.500" stroke="#bbb" stroke-width="1.700"/></svg>
<svg style="left:94px;top:292.5px" width="18" height="18" viewBox="0 0 18 18"><path d="M2 1.500 V13 L4.700 10.500 L6.700 14.700 L8.500 13.800 L6.600 9.800 H10.200 Z" fill="#f0f0f0"/><ellipse cx="13.500" cy="13" rx="5" ry="3.200" fill="#f0f0f0"/><circle cx="13.500" cy="13" r="1.500" fill="#333"/></svg>
<svg style="left:2px;top:317px" width="18" height="18" viewBox="0 0 18 18"><rect x="1.500" y="1.500" width="9" height="9" fill="none" stroke="#f0f0f0" stroke-width="1.200" stroke-dasharray="2 1.500"/><rect x="6" y="6" width="11" height="9.500" fill="none" stroke="#f0f0f0" stroke-width="1.500"/><rect x="6" y="6" width="4.500" height="4.500" fill="#bbb"/><g fill="#f0f0f0"><rect x="0.500" y="0.500" width="2.400" height="2.400"/><rect x="9.300" y="0.500" width="2.400" height="2.400"/><rect x="0.500" y="9.300" width="2.400" height="2.400"/></g></svg>
<svg style="left:33px;top:317px" width="18" height="18" viewBox="0 0 18 18"><path d="M3 5.500 L12 4 L13 12.500 L3.500 13.500 Z" fill="#f0f0f0"/><path d="M3 5.500 L16.500 1.500 L13 12.500" stroke="#f0f0f0" stroke-width="1.100" fill="none"/><g fill="#f0f0f0"><circle cx="3" cy="5.500" r="1.600"/><circle cx="16.500" cy="1.500" r="1.500"/><circle cx="13" cy="12.500" r="1.600"/><circle cx="3.500" cy="13.500" r="1.600"/></g></svg>
<svg style="left:64px;top:317px" width="18" height="18" viewBox="0 0 18 18"><circle cx="9" cy="10" r="6" fill="none" stroke="#f0f0f0" stroke-width="1.400"/><circle cx="9" cy="10" r="1.300" fill="#f0f0f0"/><path d="M9 1 L12.500 4 L9 7 Z" fill="#f0f0f0"/><rect x="7.500" y="2.500" width="2" height="3" fill="#2e2e2e"/></svg>
<svg style="left:94px;top:317px" width="18" height="18" viewBox="0 0 18 18"><path d="M2 4.500 L7.500 9 L2 13.500 Z M16 4.500 L10.500 9 L16 13.500 Z" fill="#f0f0f0"/><path d="M9 1.500 V16.500" stroke="#f0f0f0" stroke-width="1.300" stroke-dasharray="2 2"/></svg>
<svg style="left:2px;top:341.5px" width="18" height="18" viewBox="0 0 18 18"><path d="M1.500 16 C5 15.500 8.500 13 11 9 L8.500 7 C6.500 11 4 14 1.500 16 Z" fill="#f0f0f0"/><path d="M9 6.500 L12 2.500 L17.500 2 L11.500 8.500 Z" fill="#aaa"/></svg>
<svg style="left:33px;top:341.5px" width="18" height="18" viewBox="0 0 18 18"><path d="M3 15.500 L15 2.500 M3.500 4 L16 15.500" stroke="#f0f0f0" stroke-width="1.300"/></svg>
<svg style="left:64px;top:341.5px" width="18" height="18" viewBox="0 0 18 18"><path d="M1 8 L13 10 M3 14.500 L13.500 5" stroke="#f0f0f0" stroke-width="1.600"/><circle cx="14.500" cy="3.500" r="2" fill="none" stroke="#f0f0f0" stroke-width="1.200"/><circle cx="15.500" cy="11" r="2" fill="none" stroke="#f0f0f0" stroke-width="1.200"/></svg>
<svg style="left:94px;top:341.5px" width="18" height="18" viewBox="0 0 18 18"><path d="M2.500 3 H9 C13.500 3 16 6 16 10.500 V15" stroke="#f0f0f0" stroke-width="1.400" fill="none"/><circle cx="10" cy="10" r="1" fill="#f0f0f0"/></svg>
<svg style="left:2px;top:366px" width="18" height="18" viewBox="0 0 18 18"><path d="M1.500 3.500 H15 V15.500" stroke="#f0f0f0" stroke-width="1.400" fill="none"/><path d="M7 3.500 C11 5 13.500 8 15 12" stroke="#f0f0f0" stroke-width="1.300" fill="none"/></svg>
<svg style="left:33px;top:366px" width="18" height="18" viewBox="0 0 18 18"><path d="M3 2.500 H8 C13 2.500 16 6 16 11 V15.500" stroke="#f0f0f0" stroke-width="1.400" fill="none"/><path d="M3 6.500 H8 C11 6.500 12.500 8.500 12.500 11 V15.500" stroke="#f0f0f0" stroke-width="1.200" fill="none"/><path d="M6 12 L10 8 M10 8 H7.500 M10 8 V10.500" stroke="#f0f0f0" stroke-width="1" fill="none"/></svg>
<svg style="left:64px;top:366px" width="18" height="18" viewBox="0 0 18 18"><path d="M2 14 L8 5 L16.500 3.500 L11.500 12.500 Z" fill="#f0f0f0"/><path d="M2 14 L8 5 L10 8 L4.500 15 Z" fill="#bbb"/></svg>
<svg style="left:94px;top:366px" width="18" height="18" viewBox="0 0 18 18"><path d="M4 12.500 L14 3.500" stroke="#f0f0f0" stroke-width="1.100"/><rect x="12" y="1" width="3" height="3" fill="#f0f0f0"/><rect x="14.500" y="3" width="4" height="4" fill="#bbb"/><rect x="2.500" y="10.500" width="3" height="3" fill="#f0f0f0"/><rect x="5" y="12.500" width="4" height="4" fill="#bbb"/><path d="M-3.5 16.5 v4 h-4 z" fill="#c8c8c8"/></svg>
<svg style="left:2px;top:390.5px" width="18" height="18" viewBox="0 0 18 18"><path d="M2 3.500 V14.500 M16 3.500 V14.500 M2 9 H16" stroke="#f0f0f0" stroke-width="1.500"/><path d="M2.500 9 L5.500 7 V11 Z M15.500 9 L12.500 7 V11 Z" fill="#f0f0f0"/></svg>
<svg style="left:33px;top:390.5px" width="18" height="18" viewBox="0 0 18 18"><path d="M2 8.500 L5.500 15.500 M12.500 3 L16 10 M3.800 12 L14.300 6.500" stroke="#f0f0f0" stroke-width="1.500"/></svg>
<svg style="left:64px;top:390.5px" width="18" height="18" viewBox="0 0 18 18"><path d="M3 2 V15.500 H16.500" stroke="#f0f0f0" stroke-width="1.500" fill="none"/><path d="M3 4.500 C9.500 5 13.500 9 14 15.500" stroke="#f0f0f0" stroke-width="1.400" fill="none"/><path d="M3 4.500 L6 3.300 V6.300 Z M14 15.500 L12.500 12.500 L15.500 12.500 Z" fill="#f0f0f0"/></svg>
<svg style="left:94px;top:390.5px" width="18" height="18" viewBox="0 0 18 18"><path d="M2 6 C6.500 3 12.500 3 17 6 M2 14 C6.500 11 12.500 11 17 14 M2 4 V9 M17 4 V9" stroke="#f0f0f0" stroke-width="1.400" fill="none"/></svg>
<svg style="left:2px;top:415px" width="18" height="18" viewBox="0 0 18 18"><circle cx="9.500" cy="9" r="7" fill="none" stroke="#f0f0f0" stroke-width="1.400"/><path d="M5 13.500 L14 4.500" stroke="#f0f0f0" stroke-width="1.300"/><path d="M14.500 4 L11 5 L13.500 7.500 Z M4.500 14 L8 13 L5.500 10.500 Z" fill="#f0f0f0"/></svg>
<svg style="left:33px;top:415px" width="18" height="18" viewBox="0 0 18 18"><rect x="7" y="3" width="10" height="11" rx="2" fill="#f0f0f0"/><circle cx="12" cy="8.500" r="2" fill="#333"/><path d="M0 14.500 H8" stroke="#f0f0f0" stroke-width="1.700"/></svg>
<svg style="left:64px;top:415px" width="18" height="18" viewBox="0 0 18 18"><path d="M0.500 15 C0.500 4 17.500 4 17.500 15 Z" fill="#f0f0f0"/><path d="M5 13 C5 8 13 8 13 13 Z" fill="#333"/><path d="M0.500 13 H17.500" stroke="#333" stroke-width="0.700"/></svg>
<svg style="left:94px;top:415px" width="18" height="18" viewBox="0 0 18 18"><path d="M2 3.500 H16 V7 C14.800 7 14.800 11 16 11 V14.500 H2 V11 C3.200 11 3.200 7 2 7 Z" fill="#f0f0f0"/><path d="M6 3.500 V14.500" stroke="#333" stroke-width="1" stroke-dasharray="1.500 1"/></svg>
<svg style="left:0px;top:437px" width="25" height="22" viewBox="0 0 25 22"><rect x="14.500" y="3.500" width="8.500" height="8.500" fill="#b9aa78"/><rect x="17" y="6" width="3.500" height="3.500" fill="#d8c890"/><path d="M1 9.500 L9.500 1.500 L13 5 L4.500 13 Z" fill="#f2f2f2"/><path d="M9 9 L12.500 11 L11 13.500 L19.500 19" stroke="#d8d4cc" stroke-width="2" fill="none"/></svg>
<div class="a" style="left:121px;top:147px;width:3px;height:777px;background:#353535"></div>

<!-- Tool sets -->
<div class="a" style="left:0;top:517px;width:121px;height:2.500px;background:#393939"></div>
<div class="a" style="left:2.500px;top:524.500px;font-size:10px;letter-spacing:-0.3px">Tool Sets</div>
<svg style="left:76px;top:525px" width="9" height="8" viewBox="0 0 9 8"><path d="M0 1 H9 M0 4 H9 M0 7 H9" stroke="#d8d8d8" stroke-width="1.100"/></svg>
<svg style="left:93px;top:524.5px" width="7" height="9" viewBox="0 0 7 9"><path d="M1.500 0.500 H5.500 V4.500 H1.500 Z M0.500 4.500 H6.500 M3.500 4.500 V8.500" stroke="#d8d8d8" stroke-width="1" fill="none"/><path d="M4.500 0.500 V4.500" stroke="#d8d8d8" stroke-width="1.200"/></svg>
<svg style="left:109px;top:525.5px" width="7" height="7" viewBox="0 0 7 7"><path d="M0.500 0.500 L6.500 6.500 M6.500 0.500 L0.500 6.500" stroke="#e8e8e8" stroke-width="1.400"/></svg>
<div class="act" style="left:90px;top:540px;width:30px;height:22px;background:#585858"></div>
<svg style="left:1px;top:541px" width="22" height="20" viewBox="0 0 22 20"><path d="M5 14.500 H10.500 V4.500 H15" stroke="#f0f0f0" stroke-width="1.500" fill="none"/><circle cx="3" cy="14.500" r="1.700" fill="none" stroke="#f0f0f0" stroke-width="1.300"/><circle cx="19" cy="4.500" r="1.700" fill="none" stroke="#f0f0f0" stroke-width="1.300"/><path d="M5 14.500 L8 12.500 V16.500 Z M17 4.500 L14 2.500 V6.500 Z" fill="#f0f0f0"/></svg>
<svg style="left:31px;top:541px" width="22" height="20" viewBox="0 0 22 20"><path d="M1 7 H5.500 M1 11 H5.500 M5.500 14.500 V3 H14 V14.500 H21 M14 9 H19" stroke="#f0f0f0" stroke-width="1.400" fill="none"/></svg>
<svg style="left:62px;top:541px" width="22" height="20" viewBox="0 0 22 20"><path d="M4 6.500 L13 5 L14 14 L4.500 15 Z" fill="#f0f0f0"/><path d="M4 6.500 L18.500 2 L14 14" stroke="#f0f0f0" stroke-width="1.100" fill="none"/><g fill="#f0f0f0"><circle cx="4" cy="6.500" r="1.600"/><circle cx="18.500" cy="2" r="1.500"/><circle cx="14" cy="14" r="1.600"/><circle cx="4.500" cy="15" r="1.600"/></g></svg>
<svg style="left:93px;top:541px" width="22" height="20" viewBox="0 0 22 20"><path d="M1.500 10 H6 C9 10 9.500 5 11 5 C12.500 5 13 10 16 10 H20.500 M11 2.500 V17.500" stroke="#f0f0f0" stroke-width="1.200" fill="none"/></svg>
<svg style="left:1px;top:565.5px" width="22" height="20" viewBox="0 0 22 20"><rect x="0.500" y="4" width="9" height="5" rx="2.500" fill="#f0f0f0"/><rect x="3" y="5.500" width="4" height="2" fill="#888"/><path d="M9.500 6.500 H13.500 V14.500 H19" stroke="#f0f0f0" stroke-width="1.500" fill="none"/><path d="M20.500 14.500 L17.500 12.500 V16.500 Z" fill="#f0f0f0"/></svg>
<svg style="left:31px;top:565.5px" width="22" height="20" viewBox="0 0 22 20"><text x="4.500" y="5.500" font-size="6.200" font-weight="700" fill="#e8e8e8" font-family="Liberation Sans,sans-serif" letter-spacing="-0.200">VDA</text><rect x="12" y="7.500" width="7" height="9.500" fill="#3b8fe0"/><path d="M12 10 H19 M12 12.500 H19 M12 15 H19" stroke="#e8f0fa" stroke-width="0.900"/><path d="M2 10.500 H9 M4 13 H9" stroke="#3b8fe0" stroke-width="1.300"/><path d="M11.500 12 L8 9.500 V14.500 Z" fill="#f0f0f0"/></svg>
<svg style="left:62px;top:565.5px" width="22" height="20" viewBox="0 0 22 20"><path d="M3 10 H19" stroke="#f0f0f0" stroke-width="1.300"/><path d="M1 10 L4.500 7.500 V12.500 Z M21 10 L17.500 7.500 V12.500 Z" fill="#f0f0f0"/><rect x="6.500" y="7.500" width="9" height="5" rx="1.500" fill="#b0176b"/></svg>
<svg style="left:93px;top:565.5px" width="22" height="20" viewBox="0 0 22 20"><path d="M3.500 11 C4.500 3 17.500 3 18.500 11" stroke="#f0f0f0" stroke-width="1.600" fill="none"/><path d="M1 11 L4.500 8.500 V13.500 Z M21 11 L17.500 8.500 V13.500 Z" fill="#f0f0f0"/><circle cx="11" cy="11" r="3.300" fill="#b0176b"/></svg>
<svg style="left:1px;top:590px" width="22" height="20" viewBox="0 0 22 20"><rect x="4" y="3" width="14" height="5.500" rx="1" fill="#b0176b"/><path d="M1 13.500 H21" stroke="#f0f0f0" stroke-width="1.300"/><circle cx="11" cy="13.500" r="2.700" fill="#f0f0f0"/></svg>
<svg style="left:31px;top:590px" width="22" height="20" viewBox="0 0 22 20"><rect x="4" y="2" width="14" height="5.500" rx="1" fill="#b0176b"/><path d="M1 13.500 H21" stroke="#f0f0f0" stroke-width="1.200"/><path d="M2 13.500 H12" stroke="#2faa3a" stroke-width="2"/><path d="M15.500 13.500 L10 9.500 V17.500 Z" fill="#2faa3a"/></svg>
<svg style="left:62px;top:590px" width="22" height="20" viewBox="0 0 22 20"><rect x="3" y="3" width="12" height="12" fill="#dfe8df"/><path d="M3 6.500 H15 M3 10 H15" stroke="#3f8f4f" stroke-width="0.900"/><circle cx="10" cy="9" r="4" fill="#e8e8e8" stroke="#444" stroke-width="1.200"/><path d="M13 12 L18.500 17.500" stroke="#f0f0f0" stroke-width="2.300"/></svg>
<svg style="left:93px;top:590px" width="22" height="20" viewBox="0 0 22 20"><rect x="4.500" y="2.500" width="12.500" height="14.500" rx="1" fill="#cfe3d1"/><rect x="5.500" y="1.500" width="10.500" height="3" fill="#f0f0f0"/><path d="M4.500 7 H17 M4.500 10 H17 M4.500 13 H17" stroke="#3f8f4f" stroke-width="0.900"/><path d="M15 6 V17" stroke="#e04040" stroke-width="1.400" stroke-dasharray="1.500 1"/></svg>
<svg style="left:1px;top:614.5px" width="22" height="20" viewBox="0 0 22 20"><path d="M7.500 4 V15 M7.500 9.500 H15" stroke="#f0f0f0" stroke-width="1.500"/></svg>
<svg style="left:31px;top:614.5px" width="22" height="20" viewBox="0 0 22 20"><path d="M5 1.500 V18.500" stroke="#f0f0f0" stroke-width="1.400"/><circle cx="5" cy="10" r="3" fill="#f0f0f0"/><rect x="9" y="7" width="12" height="5.500" rx="1" fill="#b0176b"/></svg>
<svg style="left:62px;top:614.5px" width="22" height="20" viewBox="0 0 22 20"><circle cx="8.500" cy="5" r="2.800" fill="#f0f0f0"/><circle cx="8.500" cy="15" r="2.800" fill="#f0f0f0"/><path d="M9 5 C17 5 17 15 9 15" stroke="#f0f0f0" stroke-width="1.500" fill="none"/><path d="M7.500 1 L10.500 2.500 L7.500 4 Z" fill="#f0f0f0"/></svg>
<svg style="left:93px;top:614.5px" width="22" height="20" viewBox="0 0 22 20"><rect x="1.500" y="4.500" width="7.500" height="13" fill="#f0f0f0"/><path d="M4 4.500 V17.500 M6.500 4.500 V17.500 M1.500 8 H9 M1.500 11 H9 M1.500 14 H9" stroke="#555" stroke-width="0.800"/><path d="M5 4.500 V2.500 H11.500 V9 C11.500 12 13 12 14 12" stroke="#f0f0f0" stroke-width="1.300" fill="none"/><path d="M14 9 H17.500 C19 9 19 15 17.500 15 H14 Z" fill="#f0f0f0"/><path d="M18.500 10.500 H21.500 M18.500 13.500 H21.500" stroke="#f0f0f0" stroke-width="1.300"/></svg>
<svg style="left:1px;top:639px" width="22" height="20" viewBox="0 0 22 20"><rect x="1.500" y="2" width="19" height="16" fill="#d8d8d8"/><path d="M11 2 V18 M1.500 10 H20.500" stroke="#777" stroke-width="1"/><rect x="3.500" y="4" width="4" height="4" fill="#999"/><rect x="3.500" y="12" width="4" height="4" fill="#999"/><path d="M13 5 H18 M13 7 H18 M13 13 H18 M13 15 H18" stroke="#999" stroke-width="0.900"/></svg>
<div class="act" style="left:0;top:851px;width:29px;height:22px;background:#55555a"></div>
<svg style="left:3px;top:852px" width="24" height="20" viewBox="0 0 24 20"><path d="M4 8 L9 5" stroke="#f0f0f0" stroke-width="2"/><rect x="3.500" y="8.500" width="7" height="5.500" fill="#f0f0f0"/><rect x="10.500" y="8.500" width="6" height="5.500" fill="#e8e060"/><path d="M16.500 10 L20 11 L23 13" stroke="#e8e8e8" stroke-width="1.300" fill="none"/></svg>
<svg style="left:32px;top:852px" width="24" height="20" viewBox="0 0 24 20"><rect x="7" y="3" width="10.500" height="15" fill="#f0f0f0"/><rect x="11.500" y="4.500" width="4.500" height="12" fill="#0a0a0a"/></svg>
<svg style="left:62px;top:852px" width="24" height="20" viewBox="0 0 24 20"><path d="M3 7 H9 M3 10.500 H9 M3 14 H9" stroke="#d8c060" stroke-width="1.600" stroke-dasharray="2 1"/><path d="M10 4 V17 M10 10.500 H22 M12 8.500 H17 L19 4 M12 12.500 H15 L16.500 17" stroke="#e8d890" stroke-width="1.300" fill="none"/></svg>
<svg style="left:92px;top:852px" width="24" height="20" viewBox="0 0 24 20"><rect x="4" y="4" width="16" height="13" fill="#7a2438" stroke="#d8a8b0" stroke-width="1"/><path d="M6 10 L9 6.500 H15 L18 10 V15 H6 Z" fill="#333" stroke="#e8c8cc" stroke-width="0.800"/><path d="M6 15.500 H18" stroke="#e8e8e8" stroke-width="1.400"/></svg>
<svg style="left:3px;top:877px" width="24" height="20" viewBox="0 0 24 20"><path d="M3 17 V9 L12 3.500 L21 9 V17 Z" fill="#a83040"/><path d="M3 9 L12 3.500 L21 9" stroke="#f0c8c8" stroke-width="1.500" fill="none"/><rect x="9" y="10" width="6" height="7" fill="#333"/><path d="M5.500 10 V17 M18.500 10 V17" stroke="#f0d0d0" stroke-width="1.500"/></svg>
<svg style="left:32px;top:877px" width="24" height="20" viewBox="0 0 24 20"><path d="M6 3.500 H16.500 L18 16.500 H7.500 Z" fill="#dfe8ee"/><path d="M16.500 3.500 L7.500 16.500" stroke="#222" stroke-width="2.600"/><path d="M6 3.500 L7.500 16.500" stroke="#dfe8ee" stroke-width="1"/></svg>
<svg style="left:62px;top:877px" width="24" height="20" viewBox="0 0 24 20"><rect x="4.500" y="7" width="2" height="8" fill="#f0f0f0"/><rect x="7.500" y="6" width="2" height="10" fill="#f0f0f0"/><circle cx="15" cy="11.500" r="5.800" fill="#f0f0f0"/><circle cx="15" cy="11.500" r="3.300" fill="#333"/><circle cx="15" cy="11.500" r="1.500" fill="#f0f0f0"/><path d="M10 6 C12 3.500 17 3 20 5.500" stroke="#f0f0f0" stroke-width="1.500" fill="none"/></svg>
<svg style="left:92px;top:877px" width="24" height="20" viewBox="0 0 24 20"><rect x="5" y="4" width="14" height="13.500" fill="#f0d8b8"/><path d="M5 7 H19" stroke="#333" stroke-width="1"/><rect x="9" y="8.500" width="6" height="6.500" fill="#f0d8b8" stroke="#333" stroke-width="0.900"/><path d="M12 9 V14.500" stroke="#333" stroke-width="1.200"/><rect x="4" y="3" width="16" height="2" fill="#f0d8b8"/></svg>
<svg style="left:3px;top:902px" width="24" height="20" viewBox="0 0 24 20"><rect x="2.500" y="6" width="20" height="7.500" fill="#f0e8dc"/><path d="M5.500 9.500 V13.500 M8 10.500 V13.500 M10.500 9.500 V13.500 M13 10.500 V13.500 M15.500 9.500 V13.500 M18 10.500 V13.500 M20.500 9.500 V13.500" stroke="#555" stroke-width="0.900"/></svg>

<div class="a" style="left:125.500px;top:149px;width:156px;height:22px;background:#212121;border-radius:2px 2px 0 0"></div>
<div class="a" style="left:124px;top:169px;width:1368.500px;height:2px;background:#2a2a2a"></div>
<div class="a" style="left:131px;top:155px;font-weight:700;color:#f4f4f4;letter-spacing:-0.55px">CC Basic Device Setup.vwx</div>
<svg style="left:266px;top:156px" width="7" height="7" viewBox="0 0 7 7"><path d="M0.500 0.500 L6.500 6.500 M6.500 0.500 L0.500 6.500" stroke="#c8c8c8" stroke-width="1.300"/></svg>
<svg style="left:286px;top:155px" width="9" height="9" viewBox="0 0 9 9"><path d="M4.500 0.500 V8.500 M0.500 4.500 H8.500" stroke="#f0f0f0" stroke-width="1.500"/></svg>
<div class="a" style="left:1479px;top:157px;border:3.500px solid transparent;border-top:4px solid #9a9a9a;border-bottom:0"></div>

<svg style="left:0;top:0" width="1680" height="945" viewBox="0 0 1680 945" font-family="'Liberation Sans',sans-serif">
<rect x="137" y="184" width="6" height="740" fill="#fdfdfb"/><rect x="137" y="184" width="1355.500" height="1.500" fill="#fcfcfa"/>
<g fill="none" stroke="#6c6c6c" stroke-width="1">
<path d="M657 358.500 H901.500 V810.500 H1146"/>
<path d="M657 389.500 H901.500"/>
<path d="M901.500 779.500 H1146"/>
<path d="M657 594.500 H780.500 V543.500 H885 C890 543.500 893.500 534.500 901.500 534.500 C909.500 534.500 913 543.500 918 543.500 H1146"/>
</g>
<text transform="translate(466.6 288.6) scale(1.025 1)" font-size="28.4" fill="#0c0c96" text-anchor="start">Basic Device 1</text>
<rect x="469.5" y="297" width="187.5" height="155" fill="#ffffff" stroke="#707070" stroke-width="1"/>
<text transform="translate(563.1 315.1) scale(1.046 1)" font-size="17.2" fill="#23236f" text-anchor="middle">Basic_Basic Device</text>
<text transform="translate(484.8 363.5) scale(1.015 1)" font-size="16" fill="#9c2c78" text-anchor="start">IN 1</text>
<text transform="translate(639.1 363.5) scale(1.02 1)" font-size="16" fill="#9c2c78" text-anchor="end">OUT 1</text>
<path d="M469.5 353.4 L475.7 358.6 L469.5 363.8 Z" fill="#1f7a3c"/><path d="M650.4 353.3 L657 358.6 L650.4 363.9 Z" fill="#a81c28"/>
<text transform="translate(484.8 394.5) scale(1.015 1)" font-size="16" fill="#9c2c78" text-anchor="start">IN 2</text>
<text transform="translate(639.1 394.5) scale(1.02 1)" font-size="16" fill="#9c2c78" text-anchor="end">OUT 2</text>
<path d="M469.5 384.4 L475.7 389.6 L469.5 394.8 Z" fill="#1f7a3c"/><path d="M650.4 384.3 L657 389.6 L650.4 394.9 Z" fill="#a81c28"/>
<text transform="translate(484.8 425.5) scale(1.015 1)" font-size="16" fill="#9c2c78" text-anchor="start">LAN</text>
<text transform="translate(639.1 425.5) scale(1.02 1)" font-size="16" fill="#9c2c78" text-anchor="end">LAN</text>
<path d="M469.5 415.5 L463.5 421.1 L469.5 426.7 Z" fill="#a81c28"/><path d="M469.5 415.5 L475.5 421.1 L469.5 426.7 Z" fill="#1f6a34"/><path d="M657 415.5 L651 421.1 L657 426.7 Z" fill="#1f6a34"/><path d="M657 415.5 L663 421.1 L657 426.7 Z" fill="#a81c28"/>
<text transform="translate(466.6 524.6) scale(1.025 1)" font-size="28.4" fill="#0c0c96" text-anchor="start">Basic Device 2</text>
<rect x="469.5" y="533" width="187.5" height="155" fill="#ffffff" stroke="#707070" stroke-width="1"/>
<text transform="translate(563.1 551.1) scale(1.046 1)" font-size="17.2" fill="#23236f" text-anchor="middle">Basic_Basic Device</text>
<text transform="translate(484.8 599.5) scale(1.015 1)" font-size="16" fill="#9c2c78" text-anchor="start">IN 1</text>
<text transform="translate(639.1 599.5) scale(1.02 1)" font-size="16" fill="#9c2c78" text-anchor="end">OUT 1</text>
<path d="M469.5 589.4 L475.7 594.6 L469.5 599.8 Z" fill="#1f7a3c"/><path d="M650.4 589.3 L657 594.6 L650.4 599.9 Z" fill="#a81c28"/>
<text transform="translate(484.8 630.5) scale(1.015 1)" font-size="16" fill="#9c2c78" text-anchor="start">IN 2</text>
<text transform="translate(639.1 630.5) scale(1.02 1)" font-size="16" fill="#9c2c78" text-anchor="end">OUT 2</text>
<path d="M469.5 620.4 L475.7 625.6 L469.5 630.8 Z" fill="#1f7a3c"/><path d="M650.4 620.3 L657 625.6 L650.4 630.9 Z" fill="#a81c28"/>
<text transform="translate(484.8 661.5) scale(1.015 1)" font-size="16" fill="#9c2c78" text-anchor="start">LAN</text>
<text transform="translate(639.1 661.5) scale(1.02 1)" font-size="16" fill="#9c2c78" text-anchor="end">LAN</text>
<path d="M469.5 651.5 L463.5 657.1 L469.5 662.7 Z" fill="#a81c28"/><path d="M469.5 651.5 L475.5 657.1 L469.5 662.7 Z" fill="#1f6a34"/><path d="M657 651.5 L651 657.1 L657 662.7 Z" fill="#1f6a34"/><path d="M657 651.5 L663 657.1 L657 662.7 Z" fill="#a81c28"/>
<text transform="translate(1143.6 473.6) scale(1.025 1)" font-size="28.4" fill="#0c0c96" text-anchor="start">Basic Device 3</text>
<rect x="1146.5" y="482" width="187.5" height="155" fill="#ffffff" stroke="#707070" stroke-width="1"/>
<text transform="translate(1240.1 500.1) scale(1.046 1)" font-size="17.2" fill="#23236f" text-anchor="middle">Basic_Basic Device</text>
<text transform="translate(1161.8 548.5) scale(1.015 1)" font-size="16" fill="#9c2c78" text-anchor="start">IN 1</text>
<text transform="translate(1316.1 548.5) scale(1.02 1)" font-size="16" fill="#9c2c78" text-anchor="end">OUT 1</text>
<path d="M1146.5 538.4 L1152.7 543.6 L1146.5 548.8 Z" fill="#1f7a3c"/><path d="M1327.4 538.3 L1334 543.6 L1327.4 548.9 Z" fill="#a81c28"/>
<text transform="translate(1161.8 579.5) scale(1.015 1)" font-size="16" fill="#9c2c78" text-anchor="start">IN 2</text>
<text transform="translate(1316.1 579.5) scale(1.02 1)" font-size="16" fill="#9c2c78" text-anchor="end">OUT 2</text>
<path d="M1146.5 569.4 L1152.7 574.6 L1146.5 579.8 Z" fill="#1f7a3c"/><path d="M1327.4 569.3 L1334 574.6 L1327.4 579.9 Z" fill="#a81c28"/>
<text transform="translate(1161.8 610.5) scale(1.015 1)" font-size="16" fill="#9c2c78" text-anchor="start">LAN</text>
<text transform="translate(1316.1 610.5) scale(1.02 1)" font-size="16" fill="#9c2c78" text-anchor="end">LAN</text>
<path d="M1146.5 600.5 L1140.5 606.1 L1146.5 611.7 Z" fill="#a81c28"/><path d="M1146.5 600.5 L1152.5 606.1 L1146.5 611.7 Z" fill="#1f6a34"/><path d="M1334 600.5 L1328 606.1 L1334 611.7 Z" fill="#1f6a34"/><path d="M1334 600.5 L1340 606.1 L1334 611.7 Z" fill="#a81c28"/>
<text transform="translate(1143.6 709.6) scale(1.025 1)" font-size="28.4" fill="#0c0c96" text-anchor="start">Basic Device 4</text>
<rect x="1146.5" y="718" width="187.5" height="155" fill="#ffffff" stroke="#707070" stroke-width="1"/>
<text transform="translate(1240.1 736.1) scale(1.046 1)" font-size="17.2" fill="#23236f" text-anchor="middle">Basic_Basic Device</text>
<text transform="translate(1161.8 784.5) scale(1.015 1)" font-size="16" fill="#9c2c78" text-anchor="start">IN 1</text>
<text transform="translate(1316.1 784.5) scale(1.02 1)" font-size="16" fill="#9c2c78" text-anchor="end">OUT 1</text>
<path d="M1146.5 774.4 L1152.7 779.6 L1146.5 784.8 Z" fill="#1f7a3c"/><path d="M1327.4 774.3 L1334 779.6 L1327.4 784.9 Z" fill="#a81c28"/>
<text transform="translate(1161.8 815.5) scale(1.015 1)" font-size="16" fill="#9c2c78" text-anchor="start">IN 2</text>
<text transform="translate(1316.1 815.5) scale(1.02 1)" font-size="16" fill="#9c2c78" text-anchor="end">OUT 2</text>
<path d="M1146.5 805.4 L1152.7 810.6 L1146.5 815.8 Z" fill="#1f7a3c"/><path d="M1327.4 805.3 L1334 810.6 L1327.4 815.9 Z" fill="#a81c28"/>
<text transform="translate(1161.8 846.5) scale(1.015 1)" font-size="16" fill="#9c2c78" text-anchor="start">LAN</text>
<text transform="translate(1316.1 846.5) scale(1.02 1)" font-size="16" fill="#9c2c78" text-anchor="end">LAN</text>
<path d="M1146.5 836.5 L1140.5 842.1 L1146.5 847.7 Z" fill="#a81c28"/><path d="M1146.5 836.5 L1152.5 842.1 L1146.5 847.7 Z" fill="#1f6a34"/><path d="M1334 836.5 L1328 842.1 L1334 847.7 Z" fill="#1f6a34"/><path d="M1334 836.5 L1340 842.1 L1334 847.7 Z" fill="#a81c28"/>
<text transform="translate(671.8 371) scale(1.02 1)" font-size="13.6" fill="#111" text-anchor="start">XLR3F</text>
<text transform="translate(671.8 402) scale(1.02 1)" font-size="13.6" fill="#111" text-anchor="start">XLR3F</text>
<text transform="translate(671.8 607) scale(1.02 1)" font-size="13.6" fill="#111" text-anchor="start">XLR3F</text>
<text transform="translate(1129.7 556) scale(1.02 1)" font-size="13.6" fill="#111" text-anchor="end">XLR3F</text>
<text transform="translate(1129.7 792) scale(1.02 1)" font-size="13.6" fill="#111" text-anchor="end">XLR3F</text>
<text transform="translate(1129.7 823) scale(1.02 1)" font-size="13.6" fill="#111" text-anchor="end">XLR3F</text>
<rect x="776" y="607.500" width="9.500" height="9" fill="#fbfbf8"/><rect x="778" y="609" width="5.500" height="5.500" fill="#fdfdfb" stroke="#c4c4c0" stroke-width="0.700"/><rect x="780.200" y="611" width="1.300" height="1.300" fill="#333"/>
<path d="M769 603 V600 H772 M789 600 H792 V603 M792 620 V623 H789 M772 623 H769 V620" stroke="#fcfcfa" stroke-width="2.500" fill="none"/>
</svg>

<svg style="left:0;top:0" width="1680" height="945" viewBox="0 0 1680 945" font-family="'Liberation Sans',sans-serif">
<rect x="124" y="171" width="1369" height="13" fill="#ffffff"/><rect x="124" y="171" width="12.500" height="753" fill="#ffffff"/>
<path d="M136.500 183.500 H1493 M136.500 183.500 V924" stroke="#2e2e2e" stroke-width="1" fill="none"/>
<path d="M189.25 171V183.500M251.50 171V183.500M313.75 171V183.500M376.00 171V183.500M438.25 171V183.500M500.50 171V183.500M562.75 171V183.500M625.00 171V183.500M687.25 171V183.500M749.50 171V183.500M811.75 171V183.500M874.00 171V183.500M936.25 171V183.500M998.50 171V183.500M1060.75 171V183.500M1123.00 171V183.500M1185.25 171V183.500M1247.50 171V183.500M1309.75 171V183.500M1372.00 171V183.500M1434.25 171V183.500" stroke="#222" stroke-width="1"/>
<path d="M158.12 179.500V183.500M220.38 179.500V183.500M282.62 179.500V183.500M344.88 179.500V183.500M407.12 179.500V183.500M469.38 179.500V183.500M531.62 179.500V183.500M593.88 179.500V183.500M656.12 179.500V183.500M718.38 179.500V183.500M780.62 179.500V183.500M842.88 179.500V183.500M905.12 179.500V183.500M967.38 179.500V183.500M1029.62 179.500V183.500M1091.88 179.500V183.500M1154.12 179.500V183.500M1216.38 179.500V183.500M1278.62 179.500V183.500M1340.88 179.500V183.500M1403.12 179.500V183.500M1465.38 179.500V183.500" stroke="#444" stroke-width="1"/>
<path d="M142.56 181.700V183.500M150.34 181.700V183.500M165.91 181.700V183.500M173.69 181.700V183.500M181.47 181.700V183.500M197.03 181.700V183.500M204.81 181.700V183.500M212.59 181.700V183.500M228.16 181.700V183.500M235.94 181.700V183.500M243.72 181.700V183.500M259.28 181.700V183.500M267.06 181.700V183.500M274.84 181.700V183.500M290.41 181.700V183.500M298.19 181.700V183.500M305.97 181.700V183.500M321.53 181.700V183.500M329.31 181.700V183.500M337.09 181.700V183.500M352.66 181.700V183.500M360.44 181.700V183.500M368.22 181.700V183.500M383.78 181.700V183.500M391.56 181.700V183.500M399.34 181.700V183.500M414.91 181.700V183.500M422.69 181.700V183.500M430.47 181.700V183.500M446.03 181.700V183.500M453.81 181.700V183.500M461.59 181.700V183.500M477.16 181.700V183.500M484.94 181.700V183.500M492.72 181.700V183.500M508.28 181.700V183.500M516.06 181.700V183.500M523.84 181.700V183.500M539.41 181.700V183.500M547.19 181.700V183.500M554.97 181.700V183.500M570.53 181.700V183.500M578.31 181.700V183.500M586.09 181.700V183.500M601.66 181.700V183.500M609.44 181.700V183.500M617.22 181.700V183.500M632.78 181.700V183.500M640.56 181.700V183.500M648.34 181.700V183.500M663.91 181.700V183.500M671.69 181.700V183.500M679.47 181.700V183.500M695.03 181.700V183.500M702.81 181.700V183.500M710.59 181.700V183.500M726.16 181.700V183.500M733.94 181.700V183.500M741.72 181.700V183.500M757.28 181.700V183.500M765.06 181.700V183.500M772.84 181.700V183.500M788.41 181.700V183.500M796.19 181.700V183.500M803.97 181.700V183.500M819.53 181.700V183.500M827.31 181.700V183.500M835.09 181.700V183.500M850.66 181.700V183.500M858.44 181.700V183.500M866.22 181.700V183.500M881.78 181.700V183.500M889.56 181.700V183.500M897.34 181.700V183.500M912.91 181.700V183.500M920.69 181.700V183.500M928.47 181.700V183.500M944.03 181.700V183.500M951.81 181.700V183.500M959.59 181.700V183.500M975.16 181.700V183.500M982.94 181.700V183.500M990.72 181.700V183.500M1006.28 181.700V183.500M1014.06 181.700V183.500M1021.84 181.700V183.500M1037.41 181.700V183.500M1045.19 181.700V183.500M1052.97 181.700V183.500M1068.53 181.700V183.500M1076.31 181.700V183.500M1084.09 181.700V183.500M1099.66 181.700V183.500M1107.44 181.700V183.500M1115.22 181.700V183.500M1130.78 181.700V183.500M1138.56 181.700V183.500M1146.34 181.700V183.500M1161.91 181.700V183.500M1169.69 181.700V183.500M1177.47 181.700V183.500M1193.03 181.700V183.500M1200.81 181.700V183.500M1208.59 181.700V183.500M1224.16 181.700V183.500M1231.94 181.700V183.500M1239.72 181.700V183.500M1255.28 181.700V183.500M1263.06 181.700V183.500M1270.84 181.700V183.500M1286.41 181.700V183.500M1294.19 181.700V183.500M1301.97 181.700V183.500M1317.53 181.700V183.500M1325.31 181.700V183.500M1333.09 181.700V183.500M1348.66 181.700V183.500M1356.44 181.700V183.500M1364.22 181.700V183.500M1379.78 181.700V183.500M1387.56 181.700V183.500M1395.34 181.700V183.500M1410.91 181.700V183.500M1418.69 181.700V183.500M1426.47 181.700V183.500M1442.03 181.700V183.500M1449.81 181.700V183.500M1457.59 181.700V183.500M1473.16 181.700V183.500M1480.94 181.700V183.500M1488.72 181.700V183.500" stroke="#555" stroke-width="0.900"/>
<g font-size="7.600" font-weight="700" fill="#161616" letter-spacing="-0.350">
<text x="128.80" y="178">5'-10&quot;</text><text x="191.75" y="178">5'-8&quot;</text><text x="254.00" y="178">5'-6&quot;</text><text x="316.25" y="178">5'-4&quot;</text><text x="378.50" y="178">5'-2&quot;</text><text x="440.75" y="178">5'-0&quot;</text><text x="503.00" y="178">4'-10&quot;</text><text x="565.25" y="178">4'-8&quot;</text><text x="627.50" y="178">4'-6&quot;</text><text x="689.75" y="178">4'-4&quot;</text><text x="752.00" y="178">4'-2&quot;</text><text x="814.25" y="178">4'-0&quot;</text><text x="876.50" y="178">3'-10&quot;</text><text x="938.75" y="178">3'-8&quot;</text><text x="1001.00" y="178">3'-6&quot;</text><text x="1063.25" y="178">3'-4&quot;</text><text x="1125.50" y="178">3'-2&quot;</text><text x="1187.75" y="178">3'-0&quot;</text><text x="1250.00" y="178">2'-10&quot;</text><text x="1312.25" y="178">2'-8&quot;</text><text x="1374.50" y="178">2'-6&quot;</text><text x="1436.75" y="178">2'-4&quot;</text>
</g>
<path d="M124 202.80H136.500M124 265.02H136.500M124 327.24H136.500M124 389.46H136.500M124 451.68H136.500M124 513.90H136.500M124 576.12H136.500M124 638.34H136.500M124 700.56H136.500M124 762.78H136.500M124 825.00H136.500M124 887.22H136.500" stroke="#222" stroke-width="1"/>
<path d="M132 233.91H136.500M132 296.13H136.500M132 358.35H136.500M132 420.57H136.500M132 482.79H136.500M132 545.01H136.500M132 607.23H136.500M132 669.45H136.500M132 731.67H136.500M132 793.89H136.500M132 856.11H136.500M132 918.33H136.500" stroke="#444" stroke-width="1"/>
<path d="M134.200 187.25H136.500M134.200 195.02H136.500M134.200 210.58H136.500M134.200 218.36H136.500M134.200 226.13H136.500M134.200 241.69H136.500M134.200 249.47H136.500M134.200 257.24H136.500M134.200 272.80H136.500M134.200 280.58H136.500M134.200 288.35H136.500M134.200 303.91H136.500M134.200 311.69H136.500M134.200 319.46H136.500M134.200 335.02H136.500M134.200 342.80H136.500M134.200 350.57H136.500M134.200 366.13H136.500M134.200 373.90H136.500M134.200 381.68H136.500M134.200 397.24H136.500M134.200 405.01H136.500M134.200 412.79H136.500M134.200 428.35H136.500M134.200 436.12H136.500M134.200 443.90H136.500M134.200 459.46H136.500M134.200 467.24H136.500M134.200 475.01H136.500M134.200 490.57H136.500M134.200 498.35H136.500M134.200 506.12H136.500M134.200 521.68H136.500M134.200 529.46H136.500M134.200 537.23H136.500M134.200 552.79H136.500M134.200 560.57H136.500M134.200 568.34H136.500M134.200 583.90H136.500M134.200 591.67H136.500M134.200 599.45H136.500M134.200 615.01H136.500M134.200 622.78H136.500M134.200 630.56H136.500M134.200 646.12H136.500M134.200 653.89H136.500M134.200 661.67H136.500M134.200 677.23H136.500M134.200 685.00H136.500M134.200 692.78H136.500M134.200 708.34H136.500M134.200 716.12H136.500M134.200 723.89H136.500M134.200 739.45H136.500M134.200 747.23H136.500M134.200 755.00H136.500M134.200 770.56H136.500M134.200 778.34H136.500M134.200 786.11H136.500M134.200 801.67H136.500M134.200 809.45H136.500M134.200 817.22H136.500M134.200 832.78H136.500M134.200 840.56H136.500M134.200 848.33H136.500M134.200 863.89H136.500M134.200 871.67H136.500M134.200 879.44H136.500M134.200 895.00H136.500M134.200 902.77H136.500M134.200 910.55H136.500" stroke="#555" stroke-width="0.900"/>
<g font-size="7.600" font-weight="700" fill="#161616" letter-spacing="-0.350">
<text transform="translate(131.300 200.30) rotate(-90)">5'-0&quot;</text><text transform="translate(131.300 262.52) rotate(-90)">4'-10&quot;</text><text transform="translate(131.300 324.74) rotate(-90)">4'-8&quot;</text><text transform="translate(131.300 386.96) rotate(-90)">4'-6&quot;</text><text transform="translate(131.300 449.18) rotate(-90)">4'-4&quot;</text><text transform="translate(131.300 511.40) rotate(-90)">4'-2&quot;</text><text transform="translate(131.300 573.62) rotate(-90)">4'-0&quot;</text><text transform="translate(131.300 635.84) rotate(-90)">3'-10&quot;</text><text transform="translate(131.300 698.06) rotate(-90)">3'-8&quot;</text><text transform="translate(131.300 760.28) rotate(-90)">3'-6&quot;</text><text transform="translate(131.300 822.50) rotate(-90)">3'-4&quot;</text><text transform="translate(131.300 884.72) rotate(-90)">3'-2&quot;</text>
</g>
<rect x="124" y="171" width="13" height="13" fill="#ffffff"/><rect x="126.500" y="173.500" width="7" height="7" fill="#fff" stroke="#222" stroke-width="1"/><path d="M130 171.500 V173.500 M130 180.500 V183 M124.500 177 H126.500 M133.500 177 H136" stroke="#222" stroke-width="1"/>
<rect x="779.500" y="171" width="4" height="13" fill="#f9fbd0"/><rect x="124" y="609" width="12.500" height="4" fill="#f9fbd0"/><path d="M781.500 171 V184" stroke="#8c8c14" stroke-width="1"/><path d="M124 611 H136.500" stroke="#8c8c14" stroke-width="1"/>
</svg>

<!-- Attributes floating palette -->
<div class="a" style="left:143.500px;top:185.500px;width:113px;height:312px;background:#272727;border:0.500px solid #1c1c1c"></div>
<div class="a" style="left:144px;top:186px;width:112.500px;height:22px;background:#323232"></div>
<div class="a" style="left:147px;top:192px;font-size:11px;letter-spacing:-0.35px;color:#d4d4d4">Attribu...</div>
<svg style="left:190px;top:193px" width="9" height="8" viewBox="0 0 9 8"><path d="M0 1 H9 M0 4 H9 M0 7 H9" stroke="#d8d8d8" stroke-width="1.100"/></svg>
<div class="a" style="left:208.500px;top:192px;font-size:10.500px;color:#d0d0d0;letter-spacing:0">?</div>
<svg style="left:225.500px;top:192.500px" width="7" height="9" viewBox="0 0 7 9"><path d="M1.500 0.500 H5.500 V4.500 H1.500 Z M0.500 4.500 H6.500 M3.500 4.500 V8.500" stroke="#d0d0d0" stroke-width="1" fill="none"/><path d="M4.500 0.500 V4.500" stroke="#d0d0d0" stroke-width="1.200"/></svg>
<svg style="left:243px;top:194px" width="7" height="7" viewBox="0 0 7 7"><path d="M0.500 0.500 L6.500 6.500 M6.500 0.500 L0.500 6.500" stroke="#e8e8e8" stroke-width="1.400"/></svg>
<!-- Fill -->
<div class="a" style="left:147px;top:214.500px;color:#e8e8e8">Fill</div>
<div class="a" style="left:160px;top:220px;width:91px;height:1px;background:#3a3a3a"></div>
<div class="a" style="left:144px;top:232.500px;width:112.500px;height:21.500px;background:#2f2f2f"></div>
<div class="a" style="left:157px;top:237px;width:13.500px;height:12.500px;background:#ebebeb;border-radius:1px"></div>
<div class="a" style="left:194.500px;top:238px;color:#e8e8e8;letter-spacing:-0.2px">Solid</div>
<div class="a" style="left:240.500px;top:241.500px;border:3.800px solid transparent;border-top:4.500px solid #f0f0f0;border-bottom:0"></div>
<div class="a" style="left:147.500px;top:259px;width:105px;height:19px;background:#ffffff"></div>
<div class="a" style="left:144px;top:283.500px;width:112.500px;height:20.500px;background:#2f2f2f"></div>
<div class="a" style="left:147.500px;top:285px;width:88px;height:17.500px;background:#000"></div>
<svg style="left:147.500px;top:285px" width="13" height="18" viewBox="0 0 13 18"><defs><pattern id="chk" width="4" height="4" patternUnits="userSpaceOnUse"><rect width="4" height="4" fill="#e6e6e6"/><rect width="2" height="2" fill="#6a6a6a"/><rect x="2" y="2" width="2" height="2" fill="#6a6a6a"/></pattern><linearGradient id="fd" x1="0" x2="1"><stop offset="0.550" stop-color="#000" stop-opacity="0"/><stop offset="1" stop-color="#000" stop-opacity="1"/></linearGradient></defs><rect width="13" height="17.500" fill="url(#chk)"/><rect width="13" height="17.500" fill="url(#fd)"/></svg>
<div class="a" style="left:200px;top:289px;width:31px;text-align:right;color:#f4f4f4;letter-spacing:-0.2px">100%</div>
<div class="a" style="left:244.500px;top:288px;width:2px;height:2px;background:#e0e0e0;box-shadow:0 4.500px 0 #e0e0e0,0 9px 0 #e0e0e0"></div>
<!-- Pen -->
<div class="a" style="left:147px;top:312px;color:#e8e8e8">Pen</div>
<div class="a" style="left:166px;top:317.500px;width:85px;height:1px;background:#3a3a3a"></div>
<div class="a" style="left:144px;top:330px;width:112.500px;height:21.500px;background:#2f2f2f"></div>
<div class="a" style="left:157px;top:334.500px;width:13.500px;height:12.500px;background:#ebebeb;border-radius:1px"></div>
<div class="a" style="left:194.500px;top:335.500px;color:#e8e8e8;letter-spacing:-0.2px">Solid</div>
<div class="a" style="left:240.500px;top:339px;border:3.800px solid transparent;border-top:4.500px solid #f0f0f0;border-bottom:0"></div>
<div class="a" style="left:147.500px;top:356.500px;width:105px;height:19px;background:#000"></div>
<div class="a" style="left:144px;top:380.500px;width:112.500px;height:21px;background:#2f2f2f"></div>
<div class="a" style="left:147.500px;top:382.500px;width:88px;height:17.500px;background:#000"></div>
<svg style="left:147.500px;top:382.500px" width="13" height="18" viewBox="0 0 13 18"><rect width="13" height="17.500" fill="url(#chk)"/><rect width="13" height="17.500" fill="url(#fd)"/></svg>
<div class="a" style="left:200px;top:386.500px;width:31px;text-align:right;color:#f4f4f4;letter-spacing:-0.2px">100%</div>
<div class="a" style="left:244.500px;top:385.500px;width:2px;height:2px;background:#e0e0e0;box-shadow:0 4.500px 0 #e0e0e0,0 9px 0 #e0e0e0"></div>
<!-- line weight -->
<div class="a" style="left:144px;top:407.500px;width:112.500px;height:20.500px;background:#2f2f2f"></div>
<div class="a" style="left:149.500px;top:417.500px;width:62.500px;height:1px;background:#cfcfcf"></div>
<div class="a" style="left:214.500px;top:412.500px;color:#e0e0e0;letter-spacing:-0.2px">0.05</div>
<div class="a" style="left:240.500px;top:415.500px;border:3.800px solid transparent;border-top:4.500px solid #f0f0f0;border-bottom:0"></div>
<!-- line ends -->
<div class="a" style="left:144px;top:431.500px;width:112.500px;height:22.500px;background:#2f2f2f"></div>
<div class="a" style="left:190.500px;top:432.500px;width:19px;height:20.500px;background:#363636"></div>
<div class="a" style="left:152px;top:442.500px;width:23px;height:1.500px;background:#f0f0f0"></div>
<div class="a" style="left:179px;top:441px;border:3.300px solid transparent;border-top:4px solid #f0f0f0;border-bottom:0"></div>
<svg style="left:193px;top:434px" width="14" height="18" viewBox="0 0 14 18"><path d="M5 8 V5 C5 1.500 10 1.500 10 5 V6.500 M9.500 10 V13 C9.500 16.500 4.500 16.500 4.500 13 V11.500" stroke="#e8e8e8" stroke-width="1.400" fill="none"/><path d="M2 2.500 L12.500 15.500" stroke="#e8e8e8" stroke-width="1.200"/></svg>
<div class="a" style="left:210.500px;top:442.500px;width:20px;height:1.500px;background:#f0f0f0"></div>
<div class="a" style="left:240.500px;top:441px;border:3.800px solid transparent;border-top:4.500px solid #f0f0f0;border-bottom:0"></div>
<!-- Effects -->
<div class="a" style="left:147px;top:461px;color:#e8e8e8">Effects</div>
<div class="a" style="left:178px;top:466.500px;width:73px;height:1px;background:#3a3a3a"></div>
<div class="a" style="left:144px;top:478px;width:112.500px;height:19px;background:#2f2f2f"></div>
<div class="a" style="left:149.500px;top:483px;width:8px;height:11px;border:1px solid #454545;background:#2b2b2b"></div>
<div class="a" style="left:160px;top:483.500px;color:#e8e8e8;letter-spacing:-0.3px">Shadow</div>
<div class="a" style="left:210.500px;top:479.500px;width:25px;height:16.500px;background:#000"></div>
<div class="a" style="left:244.500px;top:481.500px;width:2px;height:2px;background:#e0e0e0;box-shadow:0 4.500px 0 #e0e0e0,0 9px 0 #e0e0e0"></div>

<!-- Right dock -->
<div class="a" style="left:1492.500px;top:171px;width:3px;height:753px;background:#3b3b37"></div>
<div class="a" style="left:1495.500px;top:147px;width:184.500px;height:23px;background:#333333"></div>
<div class="a" style="left:1497.500px;top:152px;font-size:11px;letter-spacing:-0.4px;color:#e2e2e2">Object Info - Shape</div>
<svg style="left:1617.500px;top:153px" width="9" height="8" viewBox="0 0 9 8"><path d="M0 1 H9 M0 4 H9 M0 7 H9" stroke="#d8d8d8" stroke-width="1.100"/></svg>
<div class="a" style="left:1635px;top:152px;font-size:10.500px;color:#d0d0d0;letter-spacing:0">?</div>
<svg style="left:1650.500px;top:152.500px" width="7" height="9" viewBox="0 0 7 9"><path d="M1.500 0.500 H5.500 V4.500 H1.500 Z M0.500 4.500 H6.500 M3.500 4.500 V8.500" stroke="#d0d0d0" stroke-width="1" fill="none"/><path d="M4.500 0.500 V4.500" stroke="#d0d0d0" stroke-width="1.200"/></svg>
<svg style="left:1667px;top:153.500px" width="7" height="7" viewBox="0 0 7 7"><path d="M0.500 0.500 L6.500 6.500 M6.500 0.500 L0.500 6.500" stroke="#e8e8e8" stroke-width="1.400"/></svg>
<!-- tabs -->
<div class="a" style="left:1495.500px;top:170px;width:184.500px;height:22.500px;background:#313131"></div>
<div class="a" style="left:1495.500px;top:169.500px;width:51px;height:23px;background:#262626"></div>
<svg style="left:1501px;top:174px" width="18" height="16" viewBox="0 0 18 16"><rect x="7" y="1" width="10" height="10" fill="#f2f2f2"/><circle cx="7" cy="10" r="5.800" fill="#f2f2f2" stroke="#262626" stroke-width="1.200"/></svg>
<div class="a" style="left:1523.500px;top:176.500px;color:#e8e8e8">Sh...</div>
<svg style="left:1553px;top:174px" width="19" height="15" viewBox="0 0 19 15"><path d="M0.500 1 H18.500 V14 H14.500 L13 11.500 H6 L4.500 14 H0.500 Z" fill="#f2f2f2"/><path d="M4 4.500 H15 M5.500 7.500 H13.500" stroke="#313131" stroke-width="1.300"/></svg>
<div class="a" style="left:1576px;top:176.500px;color:#d8d8d8">Da...</div>
<div class="a" style="left:1599px;top:173px;width:1px;height:17px;background:#4a4a4a"></div>
<svg style="left:1604px;top:172px" width="20" height="18" viewBox="0 0 20 18"><path d="M5 6.500 C3.500 10 4.500 15 7.500 16.500 H13.500 C16.500 15 17.500 10 16 6.500 Z" fill="#f2f2f2"/><path d="M8.500 6 C8.500 4 12.500 4 12.500 6 M10.500 3 V4.500" stroke="#f2f2f2" stroke-width="1.600" fill="none"/><path d="M5 9 C1.500 8 1 4.500 3.500 5 M16 8 C19 7 19.500 11 16 12.500" stroke="#f2f2f2" stroke-width="1.400" fill="none"/><path d="M1 4 L3 6" stroke="#f2f2f2" stroke-width="1.300"/></svg>
<div class="a" style="left:1628px;top:176.500px;color:#d8d8d8">Re...</div>
<!-- no selection -->
<div class="a" style="left:1495.500px;top:192.500px;width:184.500px;height:24px;background:#262626"></div>
<div class="a" style="left:1498.500px;top:201.500px;font-size:10px;letter-spacing:-0.3px;color:#f0f0f0">No Selection</div>
<div class="a" style="left:1495.500px;top:216px;width:184.500px;height:1px;background:#3d3d3d"></div>
<div class="a" style="left:1497px;top:217px;width:183px;height:307px;background:#252525"></div>
<div class="c" style="left:1587px;top:267px;font-size:10px;line-height:12px;letter-spacing:-0.05px;color:#ececec">There are no items to show in this<br>view</div>
<!-- Name -->
<div class="a" style="left:1495.500px;top:524px;width:184.500px;height:25px;background:#2a2a2a"></div>
<div class="a" style="left:1498px;top:533.500px;font-size:10px;letter-spacing:-0.8px;color:#6c6c6c">Name:</div>
<div class="a" style="left:1527.500px;top:527.500px;width:154px;height:18.500px;border:1px solid #565656;background:#2c2c2c"></div>
<!-- Navigation palette -->
<div class="a" style="left:1495.500px;top:549px;width:184.500px;height:21px;background:#333333"></div>
<div class="a" style="left:1498px;top:554.500px;font-size:11px;letter-spacing:-0.42px;color:#e2e2e2">Navigation - Design Lay...</div>
<svg style="left:1617.500px;top:555.500px" width="9" height="8" viewBox="0 0 9 8"><path d="M0 1 H9 M0 4 H9 M0 7 H9" stroke="#d8d8d8" stroke-width="1.100"/></svg>
<div class="a" style="left:1635px;top:554.500px;font-size:10.500px;color:#d0d0d0;letter-spacing:0">?</div>
<svg style="left:1650.500px;top:555px" width="7" height="9" viewBox="0 0 7 9"><path d="M1.500 0.500 H5.500 V4.500 H1.500 Z M0.500 4.500 H6.500 M3.500 4.500 V8.500" stroke="#d0d0d0" stroke-width="1" fill="none"/><path d="M4.500 0.500 V4.500" stroke="#d0d0d0" stroke-width="1.200"/></svg>
<svg style="left:1667px;top:556px" width="7" height="7" viewBox="0 0 7 7"><path d="M0.500 0.500 L6.500 6.500 M6.500 0.500 L0.500 6.500" stroke="#e8e8e8" stroke-width="1.400"/></svg>
<div class="a" style="left:1495.500px;top:570px;width:184.500px;height:27px;background:#313131"></div>
<div class="a" style="left:1521px;top:569px;width:27px;height:28px;background:#262626"></div>
<svg style="left:1499px;top:575px" width="19" height="17" viewBox="0 0 19 17"><g fill="#f2f2f2"><circle cx="8.500" cy="6" r="2.700"/><circle cx="2.500" cy="10" r="2"/><circle cx="15" cy="3" r="1.900"/><circle cx="15" cy="10.500" r="2"/><circle cx="7.500" cy="14.500" r="2"/></g><path d="M2.500 10 L8.500 6 L15 3 M8.500 6 L15 10.500 M8.500 6 L7.500 14.500" stroke="#f2f2f2" stroke-width="0.900"/></svg>
<svg style="left:1527px;top:575px" width="16" height="17" viewBox="0 0 16 17"><path d="M8 0.500 L15.500 4.500 L8 8.500 L0.500 4.500 Z" fill="#f2f2f2"/><path d="M0.500 8 L8 12 L15.500 8 M0.500 11.500 L8 15.500 L15.500 11.500" stroke="#f2f2f2" stroke-width="1.700" fill="none"/></svg>
<svg style="left:1552px;top:575px" width="17" height="17" viewBox="0 0 17 17"><rect x="1" y="1" width="15" height="15" fill="none" stroke="#f2f2f2" stroke-width="2"/><rect x="10" y="10" width="6" height="6" fill="#f2f2f2"/></svg>
<div class="a" style="left:1573.500px;top:576px;width:1px;height:16px;background:#4a4a4a"></div>
<svg style="left:1579px;top:575px" width="17" height="17" viewBox="0 0 17 17"><path d="M1 4.500 V1 H4.500 M12.500 1 H16 V4.500 M16 12.500 V16 H12.500 M4.500 16 H1 V12.500" stroke="#f2f2f2" stroke-width="1.400" fill="none"/><path d="M4 13.500 L6.500 4 L8.500 6.500 L10.500 4 L13 13.500 Z" fill="#f2f2f2"/></svg>
<div class="a" style="left:1600px;top:576px;width:1px;height:16px;background:#4a4a4a"></div>
<svg style="left:1605px;top:574px" width="19" height="18" viewBox="0 0 19 18"><path d="M1 1 H8.500 L12 4.500 V17 H1 Z" fill="#f2f2f2"/><path d="M8 1.500 V5 H11.500" stroke="#313131" stroke-width="1" fill="none"/><ellipse cx="12.500" cy="12.500" rx="6" ry="4" fill="#f2f2f2" stroke="#313131" stroke-width="1.200"/><circle cx="12.500" cy="12.500" r="1.800" fill="#313131"/></svg>
<div class="a" style="left:1627px;top:576px;width:1px;height:16px;background:#4a4a4a"></div>
<svg style="left:1631px;top:574px" width="18" height="18" viewBox="0 0 18 18"><path d="M4 1 H12 L16 5 V17 H4 Z" fill="#f2f2f2"/><path d="M11.500 1.500 V5.500 H15.500" stroke="#313131" stroke-width="1" fill="none"/><path d="M5.500 9 L8.500 12.500 L14 6.500" stroke="#313131" stroke-width="1.700" fill="none"/><path d="M1 10 C1 6 4 6.500 4.500 8 M1 10 L0 8 M1 10 L3 9" stroke="#f2f2f2" stroke-width="1.300" fill="none"/></svg>
<!-- options -->
<div class="a" style="left:1495.500px;top:597px;width:184.500px;height:52px;background:#2a2a2a"></div>
<div class="a" style="left:1498.500px;top:607px;font-size:10px;letter-spacing:-0.52px;color:#f0f0f0">Layer Options:</div>
<div class="dd na" style="left:1560px;top:602.500px;width:120px;height:18.500px;background:#303030;border-color:#3c3c3c;font-size:10px;letter-spacing:-0.3px;padding:3.500px 0 0 2.500px;color:#f0f0f0">Gray/Snap Others<span style="position:absolute;right:0;top:0;width:18px;height:16.500px;background:#3a3a3a"></span></div>
<div class="a" style="left:1498.500px;top:632.500px;font-size:10px;letter-spacing:-0.3px;color:#f0f0f0">Filter:</div>
<div class="dd na" style="left:1560px;top:627px;width:120px;height:18.500px;background:#303030;border-color:#3c3c3c;font-size:10px;letter-spacing:-0.3px;padding:3.500px 0 0 2.500px;color:#f0f0f0">&lt;All Layers&gt;<span style="position:absolute;right:0;top:0;width:18px;height:16.500px;background:#3a3a3a"></span></div>
<div class="a" style="left:1666.500px;top:609.500px;border:2.500px solid transparent;border-top:3px solid #d8d8d8;border-bottom:0"></div>
<div class="a" style="left:1666.500px;top:634px;border:2.500px solid transparent;border-top:3px solid #d8d8d8;border-bottom:0"></div>
<!-- search -->
<div class="a" style="left:1495.500px;top:649px;width:184.500px;height:28px;background:#262626"></div>
<div class="a" style="left:1496.500px;top:651.500px;width:183.500px;height:19px;background:#2f2f2f;border:1px solid #383838"></div>
<div class="a" style="left:1498.500px;top:657px;font-size:10px;letter-spacing:-0.3px;color:#6c6c6c">Search</div>
<svg style="left:1664px;top:654px" width="14" height="14" viewBox="0 0 14 14"><circle cx="8.500" cy="5.500" r="3.800" fill="none" stroke="#1d5fb8" stroke-width="1.600"/><path d="M5.800 8.300 L1 13" stroke="#1d5fb8" stroke-width="2"/></svg>
<!-- table -->
<div class="a" style="left:1496.500px;top:677px;width:183.500px;height:228px;background:#2b2b2b"></div>
<div class="a" style="left:1496.500px;top:677px;width:183.500px;height:17px;background:#2f2f2f;border-bottom:1px solid #3c3c3c"></div>
<div class="a" style="left:1502.500px;top:681.500px;font-size:10px;letter-spacing:0;color:#e8e8e8">Visibility</div>
<div class="a" style="left:1576px;top:681.500px;font-size:10px;letter-spacing:-0.12px;color:#e8e8e8">Design Layer</div>
<div class="a" style="left:1669px;top:681px;font-size:9px;font-style:italic;color:#d0d0d0;letter-spacing:0">I</div>
<div class="a" style="left:1675.500px;top:684px;border:2.500px solid transparent;border-bottom:3px solid #c8c8c8;border-top:0"></div>
<div class="a" style="left:1514.500px;top:694px;width:1px;height:211px;background:#3a3a3a"></div>
<div class="a" style="left:1530px;top:694px;width:1px;height:211px;background:#3a3a3a"></div>
<div class="a" style="left:1546px;top:677px;width:1px;height:228px;background:#3d3d3d"></div>
<div class="a" style="left:1663px;top:677px;width:1px;height:17px;background:#3d3d3d"></div>
<svg style="left:1499.500px;top:698px" width="12" height="9" viewBox="0 0 12 9"><path d="M0.300 4.500 C2.500 0 9.500 0 11.700 4.500 C9.500 9 2.500 9 0.300 4.500 Z" fill="#f4f4f4"/><circle cx="6" cy="4.500" r="2" fill="#2b2b2b"/></svg>
<svg style="left:1554.500px;top:699px" width="9" height="7" viewBox="0 0 9 7"><path d="M0.800 3.500 L3.300 6 L8.300 0.800" stroke="#f0f0f0" stroke-width="1.500" fill="none"/></svg>
<div class="a" style="left:1574.500px;top:697.500px;font-size:10px;font-weight:700;letter-spacing:0.2px;color:#f4f4f4">Design Layer-1</div>
<!-- scrollbar -->
<div class="a" style="left:1496.500px;top:905px;width:183.500px;height:19px;background:#3a3a3a"></div>
<div class="a" style="left:1512px;top:908.500px;width:101.500px;height:11px;background:#262626"></div>
<div class="a" style="left:1501px;top:910.500px;border:3.500px solid transparent;border-right:4.500px solid #e8e8e8;border-left:0"></div>
<div class="a" style="left:1668.500px;top:910.500px;border:3.500px solid transparent;border-left:4.500px solid #e8e8e8;border-right:0"></div>


<!-- Navigation palette -->
<div class="a" style="left:1495.500px;top:549px;width:184.500px;height:21px;background:#333333"></div>
<div class="a" style="left:1498px;top:554.500px;font-size:11px;letter-spacing:-0.42px;color:#e2e2e2">Navigation - Design Lay...</div>
<svg style="left:1617.500px;top:555.500px" width="9" height="8" viewBox="0 0 9 8"><path d="M0 1 H9 M0 4 H9 M0 7 H9" stroke="#d8d8d8" stroke-width="1.100"/></svg>
<div class="a" style="left:1635px;top:554.500px;font-size:10.500px;color:#d0d0d0;letter-spacing:0">?</div>
<svg style="left:1650.500px;top:555px" width="7" height="9" viewBox="0 0 7 9"><path d="M1.500 0.500 H5.500 V4.500 H1.500 Z M0.500 4.500 H6.500 M3.500 4.500 V8.500" stroke="#d0d0d0" stroke-width="1" fill="none"/><path d="M4.500 0.500 V4.500" stroke="#d0d0d0" stroke-width="1.200"/></svg>
<svg style="left:1667px;top:556px" width="7" height="7" viewBox="0 0 7 7"><path d="M0.500 0.500 L6.500 6.500 M6.500 0.500 L0.500 6.500" stroke="#e8e8e8" stroke-width="1.400"/></svg>
<div class="a" style="left:1495.500px;top:570px;width:184.500px;height:27px;background:#313131"></div>
<div class="a" style="left:1521px;top:569px;width:27px;height:28px;background:#262626"></div>
<svg style="left:1499px;top:575px" width="19" height="17" viewBox="0 0 19 17"><g fill="#f2f2f2"><circle cx="8.500" cy="6" r="2.700"/><circle cx="2.500" cy="10" r="2"/><circle cx="15" cy="3" r="1.900"/><circle cx="15" cy="10.500" r="2"/><circle cx="7.500" cy="14.500" r="2"/></g><path d="M2.500 10 L8.500 6 L15 3 M8.500 6 L15 10.500 M8.500 6 L7.500 14.500" stroke="#f2f2f2" stroke-width="0.900"/></svg>
<svg style="left:1527px;top:575px" width="16" height="17" viewBox="0 0 16 17"><path d="M8 0.500 L15.500 4.500 L8 8.500 L0.500 4.500 Z" fill="#f2f2f2"/><path d="M0.500 8 L8 12 L15.500 8 M0.500 11.500 L8 15.500 L15.500 11.500" stroke="#f2f2f2" stroke-width="1.700" fill="none"/></svg>
<svg style="left:1552px;top:575px" width="17" height="17" viewBox="0 0 17 17"><rect x="1" y="1" width="15" height="15" fill="none" stroke="#f2f2f2" stroke-width="2"/><rect x="10" y="10" width="6" height="6" fill="#f2f2f2"/></svg>
<div class="a" style="left:1573.500px;top:576px;width:1px;height:16px;background:#4a4a4a"></div>
<svg style="left:1579px;top:575px" width="17" height="17" viewBox="0 0 17 17"><path d="M1 4.500 V1 H4.500 M12.500 1 H16 V4.500 M16 12.500 V16 H12.500 M4.500 16 H1 V12.500" stroke="#f2f2f2" stroke-width="1.400" fill="none"/><path d="M4 13.500 L6.500 4 L8.500 6.500 L10.500 4 L13 13.500 Z" fill="#f2f2f2"/></svg>
<div class="a" style="left:1600px;top:576px;width:1px;height:16px;background:#4a4a4a"></div>
<svg style="left:1605px;top:574px" width="19" height="18" viewBox="0 0 19 18"><path d="M1 1 H8.500 L12 4.500 V17 H1 Z" fill="#f2f2f2"/><path d="M8 1.500 V5 H11.500" stroke="#313131" stroke-width="1" fill="none"/><ellipse cx="12.500" cy="12.500" rx="6" ry="4" fill="#f2f2f2" stroke="#313131" stroke-width="1.200"/><circle cx="12.500" cy="12.500" r="1.800" fill="#313131"/></svg>
<div class="a" style="left:1627px;top:576px;width:1px;height:16px;background:#4a4a4a"></div>
<svg style="left:1631px;top:574px" width="18" height="18" viewBox="0 0 18 18"><path d="M4 1 H12 L16 5 V17 H4 Z" fill="#f2f2f2"/><path d="M11.500 1.500 V5.500 H15.500" stroke="#313131" stroke-width="1" fill="none"/><path d="M5.500 9 L8.500 12.500 L14 6.500" stroke="#313131" stroke-width="1.700" fill="none"/><path d="M1 10 C1 6 4 6.500 4.500 8 M1 10 L0 8 M1 10 L3 9" stroke="#f2f2f2" stroke-width="1.300" fill="none"/></svg>
<!-- options -->
<div class="a" style="left:1495.500px;top:597px;width:184.500px;height:52px;background:#2a2a2a"></div>
<div class="a" style="left:1498.500px;top:607px;font-size:10px;letter-spacing:-0.52px;color:#f0f0f0">Layer Options:</div>
<div class="dd na" style="left:1560px;top:602.500px;width:120px;height:18.500px;background:#303030;border-color:#3c3c3c;font-size:10px;letter-spacing:-0.3px;padding:3.500px 0 0 2.500px;color:#f0f0f0">Gray/Snap Others<span style="position:absolute;right:0;top:0;width:18px;height:16.500px;background:#3a3a3a"></span></div>
<div class="a" style="left:1498.500px;top:632.500px;font-size:10px;letter-spacing:-0.3px;color:#f0f0f0">Filter:</div>
<div class="dd na" style="left:1560px;top:627px;width:120px;height:18.500px;background:#303030;border-color:#3c3c3c;font-size:10px;letter-spacing:-0.3px;padding:3.500px 0 0 2.500px;color:#f0f0f0">&lt;All Layers&gt;<span style="position:absolute;right:0;top:0;width:18px;height:16.500px;background:#3a3a3a"></span></div>
<div class="a" style="left:1666.500px;top:609.500px;border:2.500px solid transparent;border-top:3px solid #d8d8d8;border-bottom:0"></div>
<div class="a" style="left:1666.500px;top:634px;border:2.500px solid transparent;border-top:3px solid #d8d8d8;border-bottom:0"></div>
<!-- search -->
<div class="a" style="left:1495.500px;top:649px;width:184.500px;height:28px;background:#262626"></div>
<div class="a" style="left:1496.500px;top:651.500px;width:183.500px;height:19px;background:#2f2f2f;border:1px solid #383838"></div>
<div class="a" style="left:1498.500px;top:657px;font-size:10px;letter-spacing:-0.3px;color:#6c6c6c">Search</div>
<svg style="left:1664px;top:654px" width="14" height="14" viewBox="0 0 14 14"><circle cx="8.500" cy="5.500" r="3.800" fill="none" stroke="#1d5fb8" stroke-width="1.600"/><path d="M5.800 8.300 L1 13" stroke="#1d5fb8" stroke-width="2"/></svg>
<!-- table -->
<div class="a" style="left:1496.500px;top:677px;width:183.500px;height:228px;background:#2b2b2b"></div>
<div class="a" style="left:1496.500px;top:677px;width:183.500px;height:17px;background:#2f2f2f;border-bottom:1px solid #3c3c3c"></div>
<div class="a" style="left:1502.500px;top:681.500px;font-size:10px;letter-spacing:0;color:#e8e8e8">Visibility</div>
<div class="a" style="left:1576px;top:681.500px;font-size:10px;letter-spacing:-0.12px;color:#e8e8e8">Design Layer</div>
<div class="a" style="left:1669px;top:681px;font-size:9px;font-style:italic;color:#d0d0d0;letter-spacing:0">I</div>
<div class="a" style="left:1675.500px;top:684px;border:2.500px solid transparent;border-bottom:3px solid #c8c8c8;border-top:0"></div>
<div class="a" style="left:1514.500px;top:694px;width:1px;height:211px;background:#3a3a3a"></div>
<div class="a" style="left:1530px;top:694px;width:1px;height:211px;background:#3a3a3a"></div>
<div class="a" style="left:1546px;top:677px;width:1px;height:228px;background:#3d3d3d"></div>
<div class="a" style="left:1663px;top:677px;width:1px;height:17px;background:#3d3d3d"></div>
<svg style="left:1499.500px;top:698px" width="12" height="9" viewBox="0 0 12 9"><path d="M0.300 4.500 C2.500 0 9.500 0 11.700 4.500 C9.500 9 2.500 9 0.300 4.500 Z" fill="#f4f4f4"/><circle cx="6" cy="4.500" r="2" fill="#2b2b2b"/></svg>
<svg style="left:1554.500px;top:699px" width="9" height="7" viewBox="0 0 9 7"><path d="M0.800 3.500 L3.300 6 L8.300 0.800" stroke="#f0f0f0" stroke-width="1.500" fill="none"/></svg>
<div class="a" style="left:1574.500px;top:697.500px;font-size:10px;font-weight:700;letter-spacing:0.2px;color:#f4f4f4">Design Layer-1</div>
<!-- scrollbar -->
<div class="a" style="left:1496.500px;top:905px;width:183.500px;height:19px;background:#3a3a3a"></div>
<div class="a" style="left:1512px;top:908.500px;width:101.500px;height:11px;background:#262626"></div>
<div class="a" style="left:1501px;top:910.500px;border:3.500px solid transparent;border-right:4.500px solid #e8e8e8;border-left:0"></div>
<div class="a" style="left:1668.500px;top:910.500px;border:3.500px solid transparent;border-left:4.500px solid #e8e8e8;border-right:0"></div>

<div class="a" style="left:0;top:943px;width:1680px;height:2px;background:#3c3c3c"></div>
<div class="a" style="left:3px;top:930px;color:#e8e8e8;letter-spacing:-0.3px">HopOver Tool</div>
<div class="a" style="left:71px;top:930px;color:#e8e8e8;letter-spacing:-0.245px">Used to place a hopover arc in a Circuit. Select a Circuit to prioritize it for hopover.</div>
<div class="a" style="left:1453px;top:930px;color:#e8e8e8">X: -4'.969"</div>
<div class="a" style="left:1544px;top:930px;color:#e8e8e8">Y: 3'10 7/8"</div>

</body></html>
